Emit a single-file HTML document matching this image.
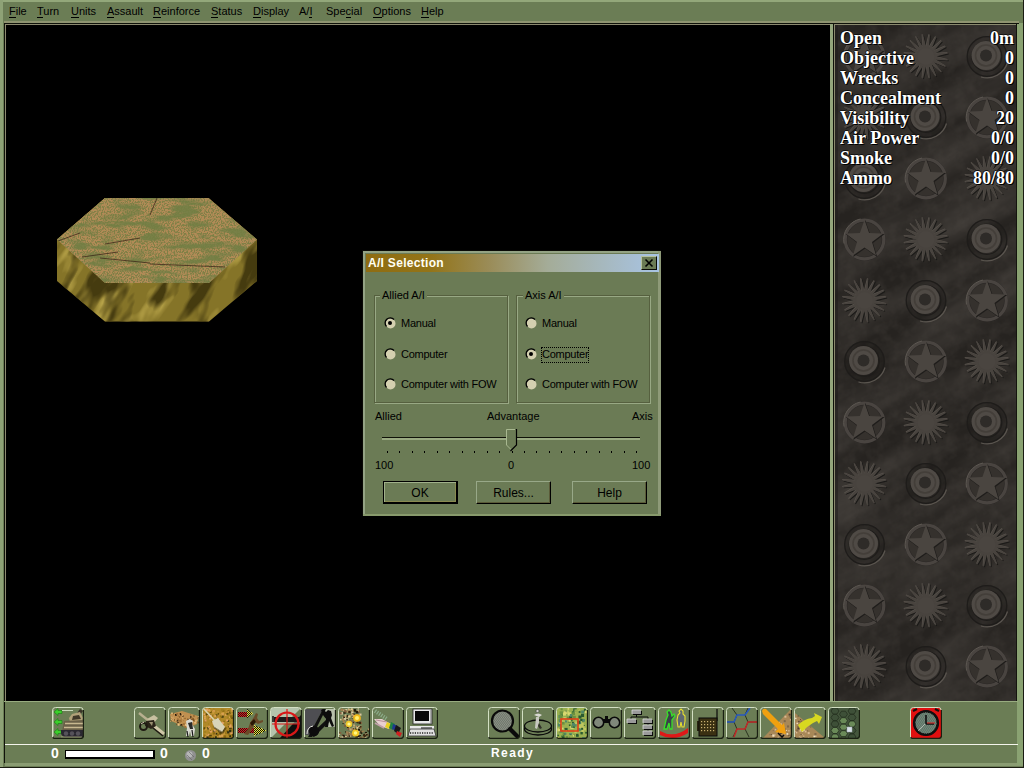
<!DOCTYPE html>
<html><head><meta charset="utf-8">
<style>
*{margin:0;padding:0;box-sizing:border-box}
html,body{width:1024px;height:768px;overflow:hidden;background:#6b7d55;position:relative;font-family:"Liberation Sans",sans-serif}
.a{position:absolute}
.menu span{position:absolute;top:5px;font-size:11px;color:#000;line-height:13px;letter-spacing:0}
.menu u{text-decoration:none;border-bottom:1px solid #000}
#map{left:4px;top:23px;width:826px;height:678px;background:#000;border-top:1px solid #101008;border-left:1px solid #101008}
.dlg{font-size:12px;color:#000}
.btn{position:absolute;height:24px;font-size:12px;text-align:center;line-height:22px}
.ico{position:absolute;top:707px;width:32px;height:32px;border-radius:4px;overflow:hidden;border-top:1px solid #c9d6b8;border-left:1px solid #c9d6b8;border-right:1px solid #2c3322;border-bottom:1px solid #2c3322;background:#6b7d55}
.ico svg{position:absolute;left:0;top:0}
.stat{position:absolute;font-family:"Liberation Serif",serif;font-weight:bold;font-size:18px;color:#fff;line-height:20px;text-shadow:1px 1px 0 #000,-1px 0 0 #111,0 -1px 0 #111}
</style></head><body>
<!-- outer frame -->
<div class="a" style="left:0;top:0;width:1024px;height:2px;background:#93a77a"></div>
<div class="a" style="left:0;top:0;width:3px;height:768px;background:#8ea276"></div>
<div class="a" style="left:1023px;top:0;width:1px;height:768px;background:#1a1c12"></div>
<div class="a" style="left:0;top:767px;width:1024px;height:1px;background:#1a1c12"></div>
<div class="a" style="left:5px;top:763px;width:1018px;height:3px;background:#8a9c72"></div>
<div class="a" style="left:1017px;top:23px;width:6px;height:742px;background:#8aa272"></div>
<div class="a" style="left:4px;top:21px;width:1015px;height:2px;background:#8f9470"></div>
<div class="a" style="left:4px;top:23px;width:1015px;height:1px;background:#10120a"></div>
<div class="a" style="left:4px;top:23px;width:1px;height:740px;background:#10120a"></div>

<!-- menu -->
<div class="menu">
<span style="left:9px"><u>F</u>ile</span>
<span style="left:37px"><u>T</u>urn</span>
<span style="left:71px"><u>U</u>nits</span>
<span style="left:107px"><u>A</u>ssault</span>
<span style="left:153px"><u>R</u>einforce</span>
<span style="left:211px"><u>S</u>tatus</span>
<span style="left:253px"><u>D</u>isplay</span>
<span style="left:299px">A/<u>I</u></span>
<span style="left:326px">Spe<u>c</u>ial</span>
<span style="left:373px"><u>O</u>ptions</span>
<span style="left:421px"><u>H</u>elp</span>
</div>

<!-- map -->
<div class="a" style="left:5px;top:24px;width:825px;height:677px;background:#000;border-top:1px solid #8c8a70;border-left:1px solid #8c8a70"></div>
<div class="a" style="left:4px;top:701px;width:1014px;height:1px;background:#98ac80"></div>
<div class="a" style="left:830px;top:24px;width:3px;height:677px;background:#94a67c"></div>
<div class="a" style="left:833px;top:24px;width:1px;height:677px;background:#10120a"></div>

<svg class="a" style="left:0;top:0" width="300" height="340" viewBox="0 0 300 340">
<defs>
<clipPath id="topf"><polygon points="105,198 208.5,198 257,239.5 209,283 105,283 57,239.5"/></clipPath>
<clipPath id="allf"><polygon points="105,198 208.5,198 257,239.5 257,281 209,321.5 105,321.5 57,281 57,239.5"/></clipPath>
<filter id="spk" color-interpolation-filters="sRGB" filterUnits="userSpaceOnUse" x="50" y="190" width="215" height="140">
<feTurbulence type="fractalNoise" baseFrequency="0.7 0.6" numOctaves="2" seed="5" result="n"/>
<feColorMatrix in="n" type="matrix" values="0 0 0 0 0.45  0 0 0 0 0.49  0 0 0 0 0.26  0 0 0 6 -2.7"/>
</filter>
<filter id="spk2" color-interpolation-filters="sRGB" filterUnits="userSpaceOnUse" x="50" y="190" width="215" height="140">
<feTurbulence type="fractalNoise" baseFrequency="0.035 0.14" numOctaves="3" seed="9" result="n"/>
<feColorMatrix in="n" type="matrix" values="0 0 0 0 0.47  0 0 0 0 0.50  0 0 0 0 0.28  0 0 0 4 -1.75"/>
</filter>
<filter id="side" color-interpolation-filters="sRGB" filterUnits="userSpaceOnUse" x="-100" y="-100" width="500" height="500">
<feTurbulence type="fractalNoise" baseFrequency="0.02 0.06" numOctaves="3" seed="3" result="n"/>
<feColorMatrix in="n" type="matrix" values="0 0 0 0 0.27  0 0 0 0 0.23  0 0 0 0 0.06  0 0 0 4.5 -2.1"/>
</filter>
<filter id="side2" color-interpolation-filters="sRGB" filterUnits="userSpaceOnUse" x="-100" y="-100" width="500" height="500">
<feTurbulence type="fractalNoise" baseFrequency="0.02 0.05" numOctaves="3" seed="17" result="n"/>
<feColorMatrix in="n" type="matrix" values="0 0 0 0 0.74  0 0 0 0 0.66  0 0 0 0 0.30  0 0 0 4.5 -2.3"/>
</filter>
</defs>
<g clip-path="url(#allf)">
<rect x="50" y="190" width="215" height="140" fill="#857428"/>
<g transform="rotate(-60 157 280)"><rect x="20" y="150" width="280" height="260" filter="url(#side2)"/>
<rect x="20" y="150" width="280" height="260" filter="url(#side)"/></g>
</g>
<g clip-path="url(#topf)">
<rect x="50" y="190" width="215" height="100" fill="#b28b57"/>
<rect x="50" y="190" width="215" height="100" filter="url(#spk2)"/>
<rect x="50" y="190" width="215" height="100" filter="url(#spk)" opacity="0.8"/>
<path d="M58 241 L80 233 M82 257 L118 252 M100 258 L150 263 M150 264 L225 267 M157 198 L150 215 M105 244 L140 238" stroke="#3a2418" stroke-width="1" opacity="0.75"/>
</g>
</svg>
<!-- PANEL -->
<div id="panel" class="a" style="left:834px;top:24px;width:183px;height:677px;background:#3b3733;overflow:hidden">
<svg width="183" height="677" style="position:absolute;left:0;top:0">
<defs>
<filter id="tex" color-interpolation-filters="sRGB" filterUnits="userSpaceOnUse" x="-300" y="-300" width="900" height="1300">
<feTurbulence type="fractalNoise" baseFrequency="0.007 0.03" numOctaves="5" seed="23"/>
<feColorMatrix type="matrix" values="0 0 0 0 0.33  0 0 0 0 0.31  0 0 0 0 0.29  0.9 0 0 0 -0.25"/>
</filter>
<filter id="fine" color-interpolation-filters="sRGB" x="0" y="0" width="100%" height="100%">
<feTurbulence type="fractalNoise" baseFrequency="0.09" numOctaves="3" seed="4"/>
<feColorMatrix type="matrix" values="0 0 0 0 0.30  0 0 0 0 0.28  0 0 0 0 0.26  0.6 0 0 0 -0.25"/>
</filter>
<g id="star">
<circle r="21" fill="#2a2725"/>
<circle r="19.3" fill="none" stroke="#494440" stroke-width="3.2"/>
<path d="M-20.5,4 A21 21 0 0 1 -4,-20.5" fill="none" stroke="#5c5751" stroke-width="1"/>
<circle r="17.2" fill="#35312d"/>
<polygon points="0.0,-20.5 4.8,-6.6 19.5,-6.3 7.8,2.5 12.0,16.6 0.0,8.2 -12.0,16.6 -7.8,2.5 -19.5,-6.3 -4.8,-6.6" fill="#1f1d1b" transform="translate(0.7,0.9)"/>
<polygon points="0.0,-19.8 4.6,-6.4 18.8,-6.1 7.5,2.4 11.6,16.0 0.0,7.9 -11.6,16.0 -7.5,2.4 -18.8,-6.1 -4.6,-6.4" fill="#4a4540"/>
</g>
<g id="sun">
<path d="M7.1,2.9 L21.7,3.9 L21.8,2.9 L7.7,-0.5ZM5.9,4.9 L19.4,10.4 L19.8,9.5 L7.5,1.9ZM4.1,6.5 L15.2,15.9 L15.9,15.2 L6.5,4.1ZM1.9,7.5 L9.5,19.8 L10.4,19.4 L4.9,5.9ZM-0.5,7.7 L2.9,21.8 L3.9,21.7 L2.9,7.1ZM-2.9,7.1 L-3.9,21.7 L-2.9,21.8 L0.5,7.7ZM-4.9,5.9 L-10.4,19.4 L-9.5,19.8 L-1.9,7.5ZM-6.5,4.1 L-15.9,15.2 L-15.2,15.9 L-4.1,6.5ZM-7.5,1.9 L-19.8,9.5 L-19.4,10.4 L-5.9,4.9ZM-7.7,-0.5 L-21.8,2.9 L-21.7,3.9 L-7.1,2.9ZM-7.1,-2.9 L-21.7,-3.9 L-21.8,-2.9 L-7.7,0.5ZM-5.9,-4.9 L-19.4,-10.4 L-19.8,-9.5 L-7.5,-1.9ZM-4.1,-6.5 L-15.2,-15.9 L-15.9,-15.2 L-6.5,-4.1ZM-1.9,-7.5 L-9.5,-19.8 L-10.4,-19.4 L-4.9,-5.9ZM0.5,-7.7 L-2.9,-21.8 L-3.9,-21.7 L-2.9,-7.1ZM2.9,-7.1 L3.9,-21.7 L2.9,-21.8 L-0.5,-7.7ZM4.9,-5.9 L10.4,-19.4 L9.5,-19.8 L1.9,-7.5ZM6.5,-4.1 L15.9,-15.2 L15.2,-15.9 L4.1,-6.5ZM7.5,-1.9 L19.8,-9.5 L19.4,-10.4 L5.9,-4.9ZM7.7,0.5 L21.8,-2.9 L21.7,-3.9 L7.1,-2.9Z" fill="#1b1a18" transform="translate(0.9,0.9)"/>
<path d="M7.1,2.9 L21.7,3.9 L21.8,2.9 L7.7,-0.5ZM5.9,4.9 L19.4,10.4 L19.8,9.5 L7.5,1.9ZM4.1,6.5 L15.2,15.9 L15.9,15.2 L6.5,4.1ZM1.9,7.5 L9.5,19.8 L10.4,19.4 L4.9,5.9ZM-0.5,7.7 L2.9,21.8 L3.9,21.7 L2.9,7.1ZM-2.9,7.1 L-3.9,21.7 L-2.9,21.8 L0.5,7.7ZM-4.9,5.9 L-10.4,19.4 L-9.5,19.8 L-1.9,7.5ZM-6.5,4.1 L-15.9,15.2 L-15.2,15.9 L-4.1,6.5ZM-7.5,1.9 L-19.8,9.5 L-19.4,10.4 L-5.9,4.9ZM-7.7,-0.5 L-21.8,2.9 L-21.7,3.9 L-7.1,2.9ZM-7.1,-2.9 L-21.7,-3.9 L-21.8,-2.9 L-7.7,0.5ZM-5.9,-4.9 L-19.4,-10.4 L-19.8,-9.5 L-7.5,-1.9ZM-4.1,-6.5 L-15.2,-15.9 L-15.9,-15.2 L-6.5,-4.1ZM-1.9,-7.5 L-9.5,-19.8 L-10.4,-19.4 L-4.9,-5.9ZM0.5,-7.7 L-2.9,-21.8 L-3.9,-21.7 L-2.9,-7.1ZM2.9,-7.1 L3.9,-21.7 L2.9,-21.8 L-0.5,-7.7ZM4.9,-5.9 L10.4,-19.4 L9.5,-19.8 L1.9,-7.5ZM6.5,-4.1 L15.9,-15.2 L15.2,-15.9 L4.1,-6.5ZM7.5,-1.9 L19.8,-9.5 L19.4,-10.4 L5.9,-4.9ZM7.7,0.5 L21.8,-2.9 L21.7,-3.9 L7.1,-2.9Z" fill="#58534d" transform="translate(-0.5,-0.5)"/>
<path d="M7.1,2.9 L21.7,3.9 L21.8,2.9 L7.7,-0.5ZM5.9,4.9 L19.4,10.4 L19.8,9.5 L7.5,1.9ZM4.1,6.5 L15.2,15.9 L15.9,15.2 L6.5,4.1ZM1.9,7.5 L9.5,19.8 L10.4,19.4 L4.9,5.9ZM-0.5,7.7 L2.9,21.8 L3.9,21.7 L2.9,7.1ZM-2.9,7.1 L-3.9,21.7 L-2.9,21.8 L0.5,7.7ZM-4.9,5.9 L-10.4,19.4 L-9.5,19.8 L-1.9,7.5ZM-6.5,4.1 L-15.9,15.2 L-15.2,15.9 L-4.1,6.5ZM-7.5,1.9 L-19.8,9.5 L-19.4,10.4 L-5.9,4.9ZM-7.7,-0.5 L-21.8,2.9 L-21.7,3.9 L-7.1,2.9ZM-7.1,-2.9 L-21.7,-3.9 L-21.8,-2.9 L-7.7,0.5ZM-5.9,-4.9 L-19.4,-10.4 L-19.8,-9.5 L-7.5,-1.9ZM-4.1,-6.5 L-15.2,-15.9 L-15.9,-15.2 L-6.5,-4.1ZM-1.9,-7.5 L-9.5,-19.8 L-10.4,-19.4 L-4.9,-5.9ZM0.5,-7.7 L-2.9,-21.8 L-3.9,-21.7 L-2.9,-7.1ZM2.9,-7.1 L3.9,-21.7 L2.9,-21.8 L-0.5,-7.7ZM4.9,-5.9 L10.4,-19.4 L9.5,-19.8 L1.9,-7.5ZM6.5,-4.1 L15.9,-15.2 L15.2,-15.9 L4.1,-6.5ZM7.5,-1.9 L19.8,-9.5 L19.4,-10.4 L5.9,-4.9ZM7.7,0.5 L21.8,-2.9 L21.7,-3.9 L7.1,-2.9Z" fill="#48433e"/>
<circle r="8.5" fill="#4a4540"/>
</g>
<g id="tgt">
<circle r="19.8" fill="#000" fill-opacity="0.12" stroke="#1e1c1a" stroke-width="1.3"/>
<path d="M20.5,6 A21.3 21.3 0 0 1 -6,20.5" fill="none" stroke="#5a554f" stroke-width="1.2"/>
<circle r="15" fill="none" stroke="#1e1c1a" stroke-width="1.2" transform="translate(-0.2,-0.2)"/>
<circle r="14.5" fill="#4f4a45" transform="translate(-1,-1)"/>
<circle r="10.5" fill="none" stroke="#433e39" stroke-width="1.6" transform="translate(-1,-1)"/>
<circle r="6" fill="#2e2b28" transform="translate(-1,-1)"/>
</g>
</defs>
<rect width="183" height="677" fill="#262320"/>
<rect x="-300" y="-300" width="900" height="1300" filter="url(#tex)" transform="rotate(-30 91 338)"/>
<rect width="183" height="677" filter="url(#fine)"/>
<use href="#star" x="30.5" y="32.5"/><use href="#sun" x="92" y="32.5"/><use href="#tgt" x="153" y="32.5"/><use href="#sun" x="30.5" y="93.5"/><use href="#tgt" x="92" y="93.5"/><use href="#star" x="153" y="93.5"/><use href="#tgt" x="30.5" y="154.5"/><use href="#star" x="92" y="154.5"/><use href="#sun" x="153" y="154.5"/><use href="#star" x="30.5" y="215.5"/><use href="#sun" x="92" y="215.5"/><use href="#tgt" x="153" y="215.5"/><use href="#sun" x="30.5" y="276.5"/><use href="#tgt" x="92" y="276.5"/><use href="#star" x="153" y="276.5"/><use href="#tgt" x="30.5" y="337.5"/><use href="#star" x="92" y="337.5"/><use href="#sun" x="153" y="337.5"/><use href="#star" x="30.5" y="398.5"/><use href="#sun" x="92" y="398.5"/><use href="#tgt" x="153" y="398.5"/><use href="#sun" x="30.5" y="459.5"/><use href="#tgt" x="92" y="459.5"/><use href="#star" x="153" y="459.5"/><use href="#tgt" x="30.5" y="520.5"/><use href="#star" x="92" y="520.5"/><use href="#sun" x="153" y="520.5"/><use href="#star" x="30.5" y="581.5"/><use href="#sun" x="92" y="581.5"/><use href="#tgt" x="153" y="581.5"/><use href="#sun" x="30.5" y="642.5"/><use href="#tgt" x="92" y="642.5"/><use href="#star" x="153" y="642.5"/>
<rect x="1" y="0" width="3" height="677" fill="#1e1c1a" opacity="0.5"/><rect x="0" y="0" width="1" height="677" fill="#8a8a6e"/><rect x="0" y="0" width="183" height="1" fill="#8a8a6e"/>
</svg>
</div>
<div class="stat" style="left:840px;top:28px">Open<br>Objective<br>Wrecks<br>Concealment<br>Visibility<br>Air Power<br>Smoke<br>Ammo</div>
<div class="stat" style="left:900px;top:28px;width:114px;text-align:right">0m<br>0<br>0<br>0<br>20<br>0/0<br>0/0<br>80/80</div>

<div class="a" style="left:1016px;top:24px;width:1px;height:677px;background:#14140e"></div>
<!-- DIALOG -->
<div id="dlg" class="a dlg" style="left:362px;top:250px;width:299px;height:266px;background:#6b7b55">
<div class="a" style="left:0;top:0;width:299px;height:1px;background:#0a0a06"></div>
<div class="a" style="left:0;top:0;width:1px;height:266px;background:#0a0a06"></div>
<div class="a" style="left:1px;top:1px;width:297px;height:2px;background:#94a384"></div>
<div class="a" style="left:1px;top:1px;width:2px;height:264px;background:#94a384"></div>
<div class="a" style="left:296px;top:1px;width:3px;height:265px;background:#8e9a78"></div>
<div class="a" style="left:1px;top:264px;width:298px;height:2px;background:#889a6c"></div>
<div class="a" style="left:4px;top:4px;width:293px;height:18px;background:linear-gradient(90deg,#8e6c12 0%,#937418 22%,#9a8c58 42%,#a4ac98 62%,#a8c4e4 100%)"></div>
<div class="a" style="left:6px;top:6px;font-weight:bold;font-size:12px;letter-spacing:0.3px;color:#fffff4;line-height:15px">A/I Selection</div>
<div class="a" style="left:279px;top:6px;width:16px;height:14px;background:#6b7b55;border-top:1px solid #b4c09c;border-left:1px solid #b4c09c;border-right:1px solid #0a0a06;border-bottom:1px solid #0a0a06"></div>
<svg class="a" style="left:279px;top:6px" width="16" height="14"><path d="M4.5 3.5 L11.5 10.5 M11.5 3.5 L4.5 10.5" stroke="#000" stroke-width="1.6"/></svg>
<!-- groups -->
<div class="a" style="left:12px;top:45px;width:134px;height:108px;border:1px solid #56603f;box-shadow:1px 1px 0 #98a884, inset 1px 1px 0 #98a884"></div>
<div class="a" style="left:18px;top:38px;padding:0 2px;background:#6b7b55;line-height:14px;font-size:11px">Allied A/I</div>
<div class="a" style="left:154px;top:45px;width:134px;height:108px;border:1px solid #56603f;box-shadow:1px 1px 0 #98a884, inset 1px 1px 0 #98a884"></div>
<div class="a" style="left:161px;top:38px;padding:0 2px;background:#6b7b55;line-height:14px;font-size:11px">Axis A/I</div>
<svg class="a" style="left:22px;top:67px" width="13" height="13"><circle cx="6.5" cy="6.5" r="5" fill="#d4d0b0"/><path d="M10 2.5 A5 5 0 0 0 2.5 9.5" stroke="#000" stroke-width="1.3" fill="none"/><circle cx="6" cy="6" r="2" fill="#000"/></svg><div class="a" style="left:39px;top:66px;font-size:11px;line-height:14px;letter-spacing:-0.25px">Manual</div>
<svg class="a" style="left:163px;top:67px" width="13" height="13"><circle cx="6.5" cy="6.5" r="5" fill="#d4d0b0"/><path d="M10 2.5 A5 5 0 0 0 2.5 9.5" stroke="#000" stroke-width="1.3" fill="none"/></svg><div class="a" style="left:180px;top:66px;font-size:11px;line-height:14px;letter-spacing:-0.25px">Manual</div>
<svg class="a" style="left:22px;top:98px" width="13" height="13"><circle cx="6.5" cy="6.5" r="5" fill="#d4d0b0"/><path d="M10 2.5 A5 5 0 0 0 2.5 9.5" stroke="#000" stroke-width="1.3" fill="none"/></svg><div class="a" style="left:39px;top:97px;font-size:11px;line-height:14px;letter-spacing:-0.25px">Computer</div>
<svg class="a" style="left:163px;top:98px" width="13" height="13"><circle cx="6.5" cy="6.5" r="5" fill="#d4d0b0"/><path d="M10 2.5 A5 5 0 0 0 2.5 9.5" stroke="#000" stroke-width="1.3" fill="none"/><circle cx="6" cy="6" r="2" fill="#000"/></svg><div class="a" style="left:180px;top:97px;font-size:11px;line-height:14px;letter-spacing:-0.25px">Computer</div>
<svg class="a" style="left:22px;top:128px" width="13" height="13"><circle cx="6.5" cy="6.5" r="5" fill="#d4d0b0"/><path d="M10 2.5 A5 5 0 0 0 2.5 9.5" stroke="#000" stroke-width="1.3" fill="none"/></svg><div class="a" style="left:39px;top:127px;font-size:11px;line-height:14px;letter-spacing:-0.25px">Computer with FOW</div>
<svg class="a" style="left:163px;top:128px" width="13" height="13"><circle cx="6.5" cy="6.5" r="5" fill="#d4d0b0"/><path d="M10 2.5 A5 5 0 0 0 2.5 9.5" stroke="#000" stroke-width="1.3" fill="none"/></svg><div class="a" style="left:180px;top:127px;font-size:11px;line-height:14px;letter-spacing:-0.25px">Computer with FOW</div>
<div class="a" style="left:179px;top:97px;width:48px;height:16px;border:1px dotted #000"></div>
<div class="a" style="left:13px;top:159px;font-size:11px;line-height:14px">Allied</div>
<div class="a" style="left:125px;top:159px;font-size:11px;line-height:14px">Advantage</div>
<div class="a" style="left:270px;top:159px;font-size:11px;line-height:14px">Axis</div>
<div class="a" style="left:20px;top:187px;width:258px;height:1px;background:#101208"></div><div class="a" style="left:20px;top:188px;width:258px;height:2px;background:#9aaa82"></div>
<svg class="a" style="left:143px;top:178px" width="14" height="24"><rect x="1" y="1" width="10" height="16" fill="#6b7b55"/><path d="M1 17 L6 22 L11 17 Z" fill="#6b7b55"/><path d="M1.5 17 V1.5 H10" stroke="#a8b890" stroke-width="1" fill="none"/><path d="M1.5 17 L6 21.5" stroke="#a8b890" stroke-width="1" fill="none"/><path d="M11.5 1 V17 L5.5 23" stroke="#000" stroke-width="1.2" fill="none"/></svg>
<div class="a" style="left:25px;top:201px;width:1px;height:2px;background:#000"></div><div class="a" style="left:37px;top:201px;width:1px;height:2px;background:#000"></div><div class="a" style="left:50px;top:201px;width:1px;height:2px;background:#000"></div><div class="a" style="left:62px;top:201px;width:1px;height:2px;background:#000"></div><div class="a" style="left:75px;top:201px;width:1px;height:2px;background:#000"></div><div class="a" style="left:87px;top:201px;width:1px;height:2px;background:#000"></div><div class="a" style="left:100px;top:201px;width:1px;height:2px;background:#000"></div><div class="a" style="left:112px;top:201px;width:1px;height:2px;background:#000"></div><div class="a" style="left:125px;top:201px;width:1px;height:2px;background:#000"></div><div class="a" style="left:137px;top:201px;width:1px;height:2px;background:#000"></div><div class="a" style="left:150px;top:201px;width:1px;height:2px;background:#000"></div><div class="a" style="left:162px;top:201px;width:1px;height:2px;background:#000"></div><div class="a" style="left:174px;top:201px;width:1px;height:2px;background:#000"></div><div class="a" style="left:187px;top:201px;width:1px;height:2px;background:#000"></div><div class="a" style="left:199px;top:201px;width:1px;height:2px;background:#000"></div><div class="a" style="left:212px;top:201px;width:1px;height:2px;background:#000"></div><div class="a" style="left:224px;top:201px;width:1px;height:2px;background:#000"></div><div class="a" style="left:237px;top:201px;width:1px;height:2px;background:#000"></div><div class="a" style="left:249px;top:201px;width:1px;height:2px;background:#000"></div><div class="a" style="left:262px;top:201px;width:1px;height:2px;background:#000"></div><div class="a" style="left:274px;top:201px;width:1px;height:2px;background:#000"></div>
<div class="a" style="left:13px;top:208px;font-size:11px;line-height:14px">100</div>
<div class="a" style="left:146px;top:208px;font-size:11px;line-height:14px">0</div>
<div class="a" style="left:270px;top:208px;font-size:11px;line-height:14px">100</div>
<div class="btn" style="left:21px;top:231px;width:75px;height:23px;border:1px solid #000;border-right-width:2px;border-bottom-width:2px;box-shadow:inset 1px 1px 0 #a0b08a, inset -1px -1px 0 #8a8a50">OK</div>
<div class="btn" style="left:114px;top:231px;width:75px;height:23px;border-top:1px solid #98a888;border-left:1px solid #98a888;border-right:1px solid #000;border-bottom:1px solid #000;box-shadow:inset -1px -1px 0 #5a5a38">Rules...</div>
<div class="btn" style="left:210px;top:231px;width:75px;height:23px;border-top:1px solid #98a888;border-left:1px solid #98a888;border-right:1px solid #000;border-bottom:1px solid #000;box-shadow:inset -1px -1px 0 #5a5a38">Help</div>
</div>

<!-- toolbar -->
<div class="a" style="left:5px;top:744px;width:1013px;height:1px;background:#f4f4ec"></div>
<div id="tb">
<svg class="a" style="left:52px;top:707px" width="32" height="32" viewBox="0 0 32 32"><rect x="1" y="1" width="30" height="30" fill="#6b7d55"/><path d="M1 3 V29" stroke="#c8d8b8" stroke-width="1"/><g fill="#3ccf2c" stroke="#1a7a10" stroke-width="0.6"><path d="M2 5 L6 1.5 V3.5 H10 V6.5 H6 V8.5 Z"/><path d="M2 15 L6 11.5 V13.5 H10 V16.5 H6 V18.5 Z"/><path d="M2 25 L6 21.5 V23.5 H10 V26.5 H6 V28.5 Z"/></g><path d="M10 3.5 H21" stroke="#c8d8b8" stroke-width="1"/><path d="M28 2 L31 4 L25 12 L22 10 Z" fill="#3a3428"/><path d="M20 7 L28 5 L31 11 L30 14 L18 15 L17 11 Z" fill="#b0a078"/><path d="M21 9 L27 8 L29 12 L20 13 Z" fill="#403828"/><path d="M12 14 L31 13 V23 L10 24 Z" fill="#6a6048"/><path d="M13 16.5 H31 M12 20.5 H31" stroke="#c8b890" stroke-width="1.6"/><path d="M9 23 H31 V30 H12 Q8 28 9 23 Z" fill="#2a2830"/><circle cx="14" cy="26.5" r="2.2" fill="#55525a"/><circle cx="20" cy="26.5" r="2.2" fill="#55525a"/><circle cx="26" cy="26.5" r="2.2" fill="#55525a"/><path d="M9 30 H30" stroke="#b0a888" stroke-width="0.8"/><path d="M0.5 31 V3.5 Q0.5 0.5 3.5 0.5 H28.5 Q31 0.5 31 3" fill="none" stroke="#d3dfc3" stroke-width="1"/><path d="M31.5 3 V28.5 Q31.5 31.5 28.5 31.5 H3 Q1 31.5 0.8 30" fill="none" stroke="#1a2012" stroke-width="1.3"/></svg>
<svg class="a" style="left:134px;top:707px" width="32" height="32" viewBox="0 0 32 32"><rect x="1" y="1" width="30" height="30" fill="#6b7d55"/><path d="M5 6 L15 14" stroke="#b8b090" stroke-width="2.4"/><path d="M13 12 L20 8 L24 11 L19 17 Z" fill="#c8c0a0"/><path d="M15 15 L30 27" stroke="#d0c8a8" stroke-width="3.4"/><path d="M14 17 L29 29" stroke="#1e1a12" stroke-width="1.6"/><path d="M12 14 L20 13 L22 19 L17 22 L11 19 Z" fill="#2a2418"/><path d="M15 15 L19 15 L18 19 Z" fill="#9a9070"/><circle cx="9.5" cy="19.5" r="3.5" fill="none" stroke="#1e1a12" stroke-width="2"/><path d="M7 17 L10 15" stroke="#d8d0b8" stroke-width="1"/><path d="M0.5 31 V3.5 Q0.5 0.5 3.5 0.5 H28.5 Q31 0.5 31 3" fill="none" stroke="#d3dfc3" stroke-width="1"/><path d="M31.5 3 V28.5 Q31.5 31.5 28.5 31.5 H3 Q1 31.5 0.8 30" fill="none" stroke="#1a2012" stroke-width="1.3"/></svg>
<svg class="a" style="left:168px;top:707px" width="32" height="32" viewBox="0 0 32 32"><rect x="1" y="1" width="30" height="30" fill="#6b7d55"/><path d="M2 7 L14 4 L30 9 L29 17 L20 21 L3 14 Z" fill="#c09050"/><rect x="8.7" y="12.7" width="1.9" height="1.9" fill="#201408"/><rect x="15.3" y="13.3" width="0.8" height="0.8" fill="#a07038"/><rect x="25.4" y="8.1" width="1.0" height="1.0" fill="#7a5020"/><rect x="22.1" y="12.7" width="1.4" height="1.4" fill="#a07038"/><rect x="19.8" y="17.9" width="1.3" height="1.3" fill="#a07038"/><rect x="25.1" y="8.3" width="1.7" height="1.7" fill="#a07038"/><rect x="26.6" y="15.4" width="1.3" height="1.3" fill="#d0a060"/><rect x="24.4" y="11.1" width="1.9" height="1.9" fill="#7a5020"/><rect x="4.7" y="6.2" width="1.1" height="1.1" fill="#7a5020"/><rect x="20.8" y="16.5" width="1.3" height="1.3" fill="#201408"/><rect x="25.3" y="13.2" width="1.5" height="1.5" fill="#a07038"/><rect x="18.4" y="18.5" width="1.8" height="1.8" fill="#e8c080"/><rect x="29.7" y="14.7" width="1.6" height="1.6" fill="#7a5020"/><rect x="11.1" y="12.7" width="1.5" height="1.5" fill="#a07038"/><rect x="22.0" y="7.4" width="1.1" height="1.1" fill="#a07038"/><rect x="5.5" y="11.7" width="0.9" height="0.9" fill="#d0a060"/><rect x="24.4" y="10.6" width="0.8" height="0.8" fill="#7a5020"/><rect x="14.0" y="10.6" width="0.9" height="0.9" fill="#e8c080"/><rect x="22.1" y="9.3" width="1.4" height="1.4" fill="#201408"/><rect x="30.0" y="9.0" width="0.9" height="0.9" fill="#e8c080"/><rect x="17.0" y="19.2" width="1.1" height="1.1" fill="#d0a060"/><rect x="9.4" y="15.0" width="1.2" height="1.2" fill="#201408"/><rect x="12.6" y="11.4" width="1.3" height="1.3" fill="#a07038"/><rect x="26.3" y="14.9" width="1.5" height="1.5" fill="#e8c080"/><rect x="28.3" y="12.1" width="1.6" height="1.6" fill="#d0a060"/><rect x="14.2" y="8.1" width="1.5" height="1.5" fill="#201408"/><rect x="2.3" y="10.6" width="1.2" height="1.2" fill="#a07038"/><rect x="12.5" y="13.4" width="0.9" height="0.9" fill="#7a5020"/><rect x="19.6" y="11.5" width="1.5" height="1.5" fill="#201408"/><rect x="9.8" y="11.8" width="0.9" height="0.9" fill="#a07038"/><rect x="9.0" y="11.3" width="1.5" height="1.5" fill="#a07038"/><rect x="7.0" y="7.0" width="1.8" height="1.8" fill="#201408"/><rect x="9.4" y="16.6" width="1.7" height="1.7" fill="#e8c080"/><rect x="2.8" y="13.1" width="1.2" height="1.2" fill="#7a5020"/><rect x="8.2" y="16.9" width="1.2" height="1.2" fill="#7a5020"/><rect x="21.0" y="14.4" width="0.9" height="0.9" fill="#e8c080"/><rect x="11.0" y="9.3" width="1.3" height="1.3" fill="#7a5020"/><rect x="11.4" y="14.4" width="1.3" height="1.3" fill="#a07038"/><rect x="8.3" y="5.9" width="1.9" height="1.9" fill="#a07038"/><rect x="10.8" y="17.4" width="1.0" height="1.0" fill="#a07038"/><rect x="9.8" y="16.9" width="1.8" height="1.8" fill="#e8c080"/><rect x="11.7" y="6.1" width="1.4" height="1.4" fill="#201408"/><rect x="25.8" y="11.4" width="1.1" height="1.1" fill="#d0a060"/><rect x="13.6" y="7.2" width="1.9" height="1.9" fill="#d0a060"/><rect x="14.2" y="19.2" width="0.8" height="0.8" fill="#7a5020"/><rect x="14.8" y="16.1" width="2.0" height="2.0" fill="#a07038"/><rect x="17.2" y="18.2" width="1.8" height="1.8" fill="#e8c080"/><rect x="24.5" y="12.2" width="1.9" height="1.9" fill="#7a5020"/><rect x="27.2" y="13.2" width="1.4" height="1.4" fill="#e8c080"/><rect x="5.4" y="12.1" width="1.6" height="1.6" fill="#7a5020"/><rect x="16.7" y="10.6" width="0.9" height="0.9" fill="#a07038"/><rect x="17.1" y="17.0" width="1.2" height="1.2" fill="#e8c080"/><rect x="7.5" y="12.6" width="1.0" height="1.0" fill="#e8c080"/><rect x="2.2" y="14.1" width="0.9" height="0.9" fill="#d0a060"/><rect x="9.6" y="8.3" width="1.4" height="1.4" fill="#a07038"/><rect x="3.4" y="9.2" width="1.8" height="1.8" fill="#e8c080"/><rect x="3.4" y="11.7" width="1.8" height="1.8" fill="#e8c080"/><rect x="4.4" y="12.0" width="1.0" height="1.0" fill="#201408"/><rect x="4.0" y="10.2" width="1.5" height="1.5" fill="#d0a060"/><rect x="12.1" y="7.1" width="1.3" height="1.3" fill="#201408"/><rect x="22.2" y="16.7" width="1.0" height="1.0" fill="#a07038"/><rect x="12.5" y="13.7" width="1.3" height="1.3" fill="#a07038"/><rect x="24.4" y="14.0" width="0.9" height="0.9" fill="#d0a060"/><rect x="19.6" y="16.2" width="1.3" height="1.3" fill="#201408"/><rect x="21.4" y="11.4" width="1.1" height="1.1" fill="#7a5020"/><rect x="9.6" y="13.4" width="1.1" height="1.1" fill="#d0a060"/><rect x="17.7" y="17.9" width="1.4" height="1.4" fill="#e8c080"/><rect x="20.5" y="18.2" width="1.6" height="1.6" fill="#d0a060"/><rect x="22.5" y="13.0" width="1.8" height="1.8" fill="#e8c080"/><rect x="22.1" y="11.6" width="1.7" height="1.7" fill="#7a5020"/><rect x="3.2" y="5.5" width="1.6" height="1.6" fill="#e8c080"/><rect x="12.5" y="17.1" width="1.8" height="1.8" fill="#201408"/><rect x="20.9" y="17.4" width="1.5" height="1.5" fill="#201408"/><rect x="23.5" y="12.2" width="0.9" height="0.9" fill="#7a5020"/><rect x="3.7" y="9.2" width="1.0" height="1.0" fill="#a07038"/><rect x="20.1" y="11.3" width="1.1" height="1.1" fill="#d0a060"/><rect x="18.8" y="19.0" width="1.3" height="1.3" fill="#a07038"/><rect x="4.3" y="12.0" width="1.8" height="1.8" fill="#d0a060"/><rect x="29.1" y="10.6" width="1.7" height="1.7" fill="#a07038"/><rect x="20.9" y="12.3" width="1.0" height="1.0" fill="#d0a060"/><rect x="13.2" y="18.2" width="0.9" height="0.9" fill="#7a5020"/><rect x="16.5" y="11.1" width="1.0" height="1.0" fill="#7a5020"/><rect x="16.4" y="19.0" width="1.9" height="1.9" fill="#a07038"/><path d="M18 14 L22 12 L25 14 L24 17 L27 22 L26 29 L23 29 L22 24 L21 29 L18 29 L19 21 Z" fill="#d8d8d0"/><path d="M20 16 L24 15 L25 22 L22 22 Z" fill="#2a2a28"/><path d="M19 24 L20 30 M24 23 L25 30" stroke="#181818" stroke-width="1.2"/><path d="M0.5 31 V3.5 Q0.5 0.5 3.5 0.5 H28.5 Q31 0.5 31 3" fill="none" stroke="#d3dfc3" stroke-width="1"/><path d="M31.5 3 V28.5 Q31.5 31.5 28.5 31.5 H3 Q1 31.5 0.8 30" fill="none" stroke="#1a2012" stroke-width="1.3"/></svg>
<svg class="a" style="left:202px;top:707px" width="32" height="32" viewBox="0 0 32 32"><rect x="1" y="1" width="30" height="30" fill="#b08828"/><rect x="7.8" y="4.0" width="1.8" height="1.8" fill="#5a4808"/><rect x="3.6" y="1.6" width="2.5" height="2.5" fill="#e0a060"/><rect x="24.2" y="23.2" width="1.8" height="1.8" fill="#8a6810"/><rect x="11.4" y="23.6" width="1.2" height="1.2" fill="#303010"/><rect x="7.2" y="27.9" width="2.0" height="2.0" fill="#303010"/><rect x="8.5" y="8.9" width="1.5" height="1.5" fill="#8a6810"/><rect x="19.2" y="22.2" width="2.4" height="2.4" fill="#303010"/><rect x="11.8" y="25.5" width="2.1" height="2.1" fill="#d8a050"/><rect x="15.7" y="6.2" width="1.4" height="1.4" fill="#5a4808"/><rect x="28.4" y="24.7" width="2.3" height="2.3" fill="#e0a060"/><rect x="1.2" y="9.5" width="2.4" height="2.4" fill="#a08020"/><rect x="25.6" y="15.7" width="1.7" height="1.7" fill="#5a4808"/><rect x="9.4" y="14.1" width="1.5" height="1.5" fill="#8a6810"/><rect x="24.6" y="2.3" width="1.7" height="1.7" fill="#c89838"/><rect x="29.9" y="16.0" width="1.8" height="1.8" fill="#a08020"/><rect x="10.9" y="29.9" width="1.1" height="1.1" fill="#8a6810"/><rect x="27.5" y="19.4" width="1.4" height="1.4" fill="#5a4808"/><rect x="11.3" y="22.7" width="2.0" height="2.0" fill="#d8a050"/><rect x="6.8" y="10.4" width="1.1" height="1.1" fill="#303010"/><rect x="7.6" y="23.2" width="2.4" height="2.4" fill="#e0a060"/><rect x="4.5" y="28.1" width="1.7" height="1.7" fill="#d8a050"/><rect x="2.2" y="21.2" width="2.2" height="2.2" fill="#d8a050"/><rect x="28.8" y="1.5" width="1.5" height="1.5" fill="#d8a050"/><rect x="5.4" y="19.9" width="2.5" height="2.5" fill="#303010"/><rect x="19.0" y="24.7" width="2.0" height="2.0" fill="#d8a050"/><rect x="26.9" y="9.5" width="1.6" height="1.6" fill="#d8a050"/><rect x="28.9" y="10.6" width="1.6" height="1.6" fill="#c89838"/><rect x="14.2" y="11.6" width="1.6" height="1.6" fill="#303010"/><rect x="9.4" y="3.8" width="1.7" height="1.7" fill="#8a6810"/><rect x="7.0" y="2.7" width="2.2" height="2.2" fill="#c89838"/><rect x="18.3" y="29.1" width="1.1" height="1.1" fill="#e0a060"/><rect x="15.2" y="8.2" width="1.2" height="1.2" fill="#c89838"/><rect x="16.3" y="23.4" width="2.0" height="2.0" fill="#5a4808"/><rect x="6.8" y="6.9" width="1.7" height="1.7" fill="#5a4808"/><rect x="2.1" y="13.2" width="2.0" height="2.0" fill="#8a6810"/><rect x="13.4" y="7.3" width="1.1" height="1.1" fill="#8a6810"/><rect x="8.4" y="8.0" width="2.2" height="2.2" fill="#8a6810"/><rect x="13.1" y="8.6" width="1.1" height="1.1" fill="#d8a050"/><rect x="27.9" y="17.4" width="1.6" height="1.6" fill="#e0a060"/><rect x="27.1" y="20.0" width="2.1" height="2.1" fill="#303010"/><rect x="2.2" y="12.2" width="1.3" height="1.3" fill="#5a4808"/><rect x="26.3" y="27.1" width="1.5" height="1.5" fill="#8a6810"/><rect x="20.1" y="24.2" width="1.5" height="1.5" fill="#a08020"/><rect x="13.2" y="7.2" width="2.1" height="2.1" fill="#303010"/><rect x="8.8" y="27.8" width="1.1" height="1.1" fill="#5a4808"/><rect x="29.2" y="28.9" width="1.3" height="1.3" fill="#a08020"/><rect x="12.4" y="19.0" width="2.5" height="2.5" fill="#303010"/><rect x="20.3" y="2.8" width="2.1" height="2.1" fill="#8a6810"/><rect x="14.5" y="14.7" width="2.5" height="2.5" fill="#5a4808"/><rect x="7.3" y="1.1" width="1.0" height="1.0" fill="#8a6810"/><rect x="26.4" y="4.4" width="2.2" height="2.2" fill="#303010"/><rect x="12.1" y="7.4" width="2.4" height="2.4" fill="#c89838"/><rect x="6.8" y="20.5" width="2.3" height="2.3" fill="#d8a050"/><rect x="17.3" y="23.7" width="1.7" height="1.7" fill="#e0a060"/><rect x="3.3" y="21.2" width="1.8" height="1.8" fill="#c89838"/><rect x="26.1" y="18.6" width="1.1" height="1.1" fill="#8a6810"/><rect x="3.3" y="26.5" width="1.5" height="1.5" fill="#c89838"/><rect x="11.1" y="3.2" width="1.7" height="1.7" fill="#e0a060"/><rect x="7.0" y="29.3" width="1.4" height="1.4" fill="#5a4808"/><rect x="15.1" y="29.0" width="1.1" height="1.1" fill="#c89838"/><rect x="27.6" y="24.2" width="1.8" height="1.8" fill="#d8a050"/><rect x="13.6" y="25.9" width="1.7" height="1.7" fill="#303010"/><rect x="19.2" y="28.3" width="1.5" height="1.5" fill="#a08020"/><rect x="25.3" y="13.3" width="1.9" height="1.9" fill="#303010"/><rect x="11.8" y="5.7" width="1.2" height="1.2" fill="#a08020"/><rect x="15.3" y="10.8" width="2.6" height="2.6" fill="#e0a060"/><rect x="1.1" y="5.9" width="1.5" height="1.5" fill="#a08020"/><rect x="16.8" y="15.1" width="2.0" height="2.0" fill="#a08020"/><rect x="16.3" y="16.1" width="2.4" height="2.4" fill="#5a4808"/><rect x="11.3" y="23.2" width="2.0" height="2.0" fill="#303010"/><rect x="20.6" y="18.7" width="1.9" height="1.9" fill="#d8a050"/><rect x="27.4" y="23.7" width="1.5" height="1.5" fill="#e0a060"/><rect x="26.2" y="23.8" width="2.0" height="2.0" fill="#e0a060"/><rect x="12.4" y="8.3" width="1.6" height="1.6" fill="#e0a060"/><rect x="20.2" y="4.9" width="2.0" height="2.0" fill="#c89838"/><rect x="20.6" y="19.0" width="2.4" height="2.4" fill="#d8a050"/><rect x="11.8" y="17.7" width="2.1" height="2.1" fill="#d8a050"/><rect x="26.6" y="3.2" width="2.5" height="2.5" fill="#a08020"/><rect x="6.2" y="20.0" width="1.3" height="1.3" fill="#d8a050"/><rect x="26.6" y="18.5" width="2.5" height="2.5" fill="#e0a060"/><rect x="25.1" y="24.2" width="2.3" height="2.3" fill="#303010"/><rect x="3.9" y="6.3" width="2.1" height="2.1" fill="#5a4808"/><rect x="29.8" y="3.2" width="1.3" height="1.3" fill="#c89838"/><rect x="14.9" y="26.7" width="2.0" height="2.0" fill="#8a6810"/><rect x="25.1" y="9.8" width="1.6" height="1.6" fill="#a08020"/><rect x="18.4" y="27.0" width="1.4" height="1.4" fill="#a08020"/><rect x="11.7" y="22.6" width="2.0" height="2.0" fill="#e0a060"/><rect x="29.9" y="27.1" width="1.8" height="1.8" fill="#5a4808"/><rect x="29.1" y="10.1" width="1.7" height="1.7" fill="#5a4808"/><rect x="1.4" y="6.3" width="1.7" height="1.7" fill="#e0a060"/><rect x="17.3" y="25.0" width="2.5" height="2.5" fill="#5a4808"/><rect x="19.1" y="5.5" width="1.7" height="1.7" fill="#c89838"/><rect x="29.0" y="19.3" width="2.0" height="2.0" fill="#d8a050"/><rect x="10.1" y="3.6" width="1.8" height="1.8" fill="#d8a050"/><rect x="19.6" y="14.8" width="2.2" height="2.2" fill="#e0a060"/><rect x="5.3" y="7.9" width="1.2" height="1.2" fill="#d8a050"/><rect x="2.4" y="12.5" width="2.1" height="2.1" fill="#e0a060"/><rect x="16.9" y="28.8" width="1.0" height="1.0" fill="#d8a050"/><rect x="8.1" y="22.8" width="1.1" height="1.1" fill="#8a6810"/><rect x="10.2" y="4.5" width="2.4" height="2.4" fill="#c89838"/><rect x="19.7" y="18.7" width="2.1" height="2.1" fill="#a08020"/><rect x="22.2" y="20.0" width="2.4" height="2.4" fill="#8a6810"/><rect x="21.9" y="17.2" width="1.0" height="1.0" fill="#a08020"/><rect x="26.5" y="5.5" width="1.2" height="1.2" fill="#5a4808"/><rect x="25.5" y="15.0" width="1.6" height="1.6" fill="#c89838"/><rect x="5.7" y="26.8" width="1.6" height="1.6" fill="#e0a060"/><rect x="20.8" y="26.0" width="1.3" height="1.3" fill="#d8a050"/><rect x="2.8" y="29.4" width="2.4" height="2.4" fill="#d8a050"/><rect x="1.6" y="28.8" width="1.1" height="1.1" fill="#8a6810"/><rect x="4.4" y="18.7" width="1.4" height="1.4" fill="#c89838"/><rect x="17.1" y="14.8" width="1.9" height="1.9" fill="#a08020"/><rect x="26.7" y="14.1" width="2.1" height="2.1" fill="#a08020"/><rect x="27.7" y="28.2" width="1.5" height="1.5" fill="#5a4808"/><rect x="6.0" y="16.4" width="1.2" height="1.2" fill="#8a6810"/><rect x="19.0" y="27.4" width="2.5" height="2.5" fill="#d8a050"/><rect x="25.1" y="13.0" width="1.1" height="1.1" fill="#a08020"/><rect x="19.3" y="8.4" width="2.3" height="2.3" fill="#303010"/><rect x="18.1" y="23.7" width="2.0" height="2.0" fill="#5a4808"/><rect x="10.8" y="25.2" width="2.4" height="2.4" fill="#8a6810"/><rect x="26.6" y="20.1" width="1.1" height="1.1" fill="#a08020"/><rect x="10.3" y="14.8" width="2.5" height="2.5" fill="#d8a050"/><rect x="6.1" y="2.3" width="1.9" height="1.9" fill="#e0a060"/><rect x="18.3" y="8.2" width="2.1" height="2.1" fill="#8a6810"/><rect x="10.8" y="18.4" width="2.1" height="2.1" fill="#8a6810"/><rect x="4.4" y="29.4" width="2.3" height="2.3" fill="#303010"/><rect x="25.3" y="3.1" width="2.0" height="2.0" fill="#8a6810"/><rect x="19.0" y="1.5" width="2.6" height="2.6" fill="#a08020"/><rect x="1.3" y="21.2" width="1.6" height="1.6" fill="#8a6810"/><rect x="26.8" y="22.7" width="2.6" height="2.6" fill="#303010"/><rect x="25.9" y="19.3" width="1.1" height="1.1" fill="#5a4808"/><rect x="13.0" y="29.3" width="1.8" height="1.8" fill="#303010"/><rect x="15.8" y="17.2" width="2.3" height="2.3" fill="#d8a050"/><rect x="21.4" y="13.7" width="1.3" height="1.3" fill="#8a6810"/><rect x="14.9" y="13.7" width="1.5" height="1.5" fill="#d8a050"/><rect x="27.3" y="28.5" width="1.7" height="1.7" fill="#303010"/><rect x="22.8" y="7.1" width="1.8" height="1.8" fill="#d8a050"/><rect x="1.9" y="8.6" width="2.1" height="2.1" fill="#d8a050"/><rect x="19.6" y="18.8" width="1.1" height="1.1" fill="#d8a050"/><rect x="29.6" y="5.8" width="2.1" height="2.1" fill="#c89838"/><rect x="28.1" y="8.4" width="2.4" height="2.4" fill="#8a6810"/><rect x="15.5" y="4.3" width="1.0" height="1.0" fill="#d8a050"/><rect x="17.5" y="6.9" width="1.4" height="1.4" fill="#c89838"/><rect x="25.5" y="4.3" width="1.5" height="1.5" fill="#d8a050"/><rect x="17.5" y="20.2" width="1.1" height="1.1" fill="#a08020"/><rect x="25.6" y="6.2" width="2.2" height="2.2" fill="#a08020"/><rect x="22.9" y="24.2" width="1.3" height="1.3" fill="#a08020"/><rect x="2.0" y="10.4" width="2.2" height="2.2" fill="#d8a050"/><rect x="23.3" y="25.5" width="1.3" height="1.3" fill="#8a6810"/><rect x="7.2" y="28.7" width="2.1" height="2.1" fill="#8a6810"/><rect x="29.4" y="2.7" width="2.1" height="2.1" fill="#d8a050"/><rect x="20.4" y="25.5" width="2.4" height="2.4" fill="#c89838"/><rect x="24.1" y="12.4" width="1.9" height="1.9" fill="#e0a060"/><rect x="16.7" y="11.5" width="1.6" height="1.6" fill="#a08020"/><rect x="2.1" y="27.6" width="1.2" height="1.2" fill="#8a6810"/><rect x="7.4" y="7.9" width="2.4" height="2.4" fill="#e0a060"/><rect x="28.2" y="20.6" width="1.6" height="1.6" fill="#5a4808"/><rect x="21.5" y="28.4" width="2.6" height="2.6" fill="#8a6810"/><rect x="6.4" y="16.5" width="1.0" height="1.0" fill="#c89838"/><rect x="6.5" y="24.9" width="1.5" height="1.5" fill="#a08020"/><rect x="16.7" y="28.3" width="2.3" height="2.3" fill="#d8a050"/><rect x="24.3" y="5.7" width="2.0" height="2.0" fill="#5a4808"/><rect x="11.2" y="1.2" width="1.2" height="1.2" fill="#a08020"/><rect x="1.9" y="23.7" width="2.1" height="2.1" fill="#a08020"/><rect x="7.1" y="10.6" width="1.9" height="1.9" fill="#e0a060"/><rect x="26.9" y="15.0" width="1.8" height="1.8" fill="#a08020"/><rect x="6.3" y="18.8" width="1.5" height="1.5" fill="#e0a060"/><rect x="1.6" y="20.2" width="1.7" height="1.7" fill="#5a4808"/><rect x="24.2" y="5.0" width="1.2" height="1.2" fill="#c89838"/><rect x="18.5" y="7.8" width="1.5" height="1.5" fill="#a08020"/><rect x="19.4" y="5.9" width="2.5" height="2.5" fill="#d8a050"/><path d="M2 2 L14 15" stroke="#d8d0a8" stroke-width="1.8"/><path d="M11 16 L17 13 L24 22 L21 27 L13 22 Z" fill="#3a3010" opacity="0.6"/><path d="M10 14 L16 11 L23 20 L20 25 L12 20 Z" fill="#d8d4b8"/><path d="M12 20 L20 25" stroke="#8a8060" stroke-width="1"/><path d="M0.5 31 V3.5 Q0.5 0.5 3.5 0.5 H28.5 Q31 0.5 31 3" fill="none" stroke="#d3dfc3" stroke-width="1"/><path d="M31.5 3 V28.5 Q31.5 31.5 28.5 31.5 H3 Q1 31.5 0.8 30" fill="none" stroke="#1a2012" stroke-width="1.3"/></svg>
<svg class="a" style="left:236px;top:707px" width="32" height="32" viewBox="0 0 32 32"><rect x="1" y="1" width="30" height="30" fill="#6b7d55"/><rect x="2" y="5" width="1" height="1" fill="#3a1010"/><rect x="2" y="6" width="1" height="1" fill="#d02020"/><rect x="2" y="7" width="1" height="1" fill="#3a1010"/><rect x="2" y="8" width="1" height="1" fill="#d02020"/><rect x="2" y="9" width="1" height="1" fill="#3a1010"/><rect x="3" y="5" width="1" height="1" fill="#d02020"/><rect x="3" y="6" width="1" height="1" fill="#3a1010"/><rect x="3" y="7" width="1" height="1" fill="#d02020"/><rect x="3" y="8" width="1" height="1" fill="#3a1010"/><rect x="3" y="9" width="1" height="1" fill="#d02020"/><rect x="4" y="5" width="1" height="1" fill="#3a1010"/><rect x="4" y="6" width="1" height="1" fill="#d02020"/><rect x="4" y="7" width="1" height="1" fill="#3a1010"/><rect x="4" y="8" width="1" height="1" fill="#d02020"/><rect x="4" y="9" width="1" height="1" fill="#3a1010"/><rect x="5" y="5" width="1" height="1" fill="#d02020"/><rect x="5" y="6" width="1" height="1" fill="#3a1010"/><rect x="5" y="7" width="1" height="1" fill="#d02020"/><rect x="5" y="8" width="1" height="1" fill="#3a1010"/><rect x="5" y="9" width="1" height="1" fill="#d02020"/><rect x="6" y="5" width="1" height="1" fill="#3a1010"/><rect x="6" y="6" width="1" height="1" fill="#d02020"/><rect x="6" y="7" width="1" height="1" fill="#3a1010"/><rect x="6" y="8" width="1" height="1" fill="#d02020"/><rect x="6" y="9" width="1" height="1" fill="#3a1010"/><rect x="7" y="5" width="1" height="1" fill="#d02020"/><rect x="7" y="6" width="1" height="1" fill="#3a1010"/><rect x="7" y="7" width="1" height="1" fill="#d02020"/><rect x="7" y="8" width="1" height="1" fill="#3a1010"/><rect x="7" y="9" width="1" height="1" fill="#d02020"/><rect x="8" y="5" width="1" height="1" fill="#3a1010"/><rect x="8" y="6" width="1" height="1" fill="#d02020"/><rect x="8" y="7" width="1" height="1" fill="#3a1010"/><rect x="8" y="8" width="1" height="1" fill="#d02020"/><rect x="8" y="9" width="1" height="1" fill="#3a1010"/><rect x="9" y="5" width="1" height="1" fill="#d02020"/><rect x="9" y="6" width="1" height="1" fill="#3a1010"/><rect x="9" y="7" width="1" height="1" fill="#d02020"/><rect x="9" y="8" width="1" height="1" fill="#3a1010"/><rect x="9" y="9" width="1" height="1" fill="#d02020"/><rect x="10" y="5" width="1" height="1" fill="#3a1010"/><rect x="10" y="6" width="1" height="1" fill="#d02020"/><rect x="10" y="7" width="1" height="1" fill="#3a1010"/><rect x="10" y="8" width="1" height="1" fill="#d02020"/><rect x="10" y="9" width="1" height="1" fill="#3a1010"/><rect x="11" y="5" width="1" height="1" fill="#d02020"/><rect x="11" y="6" width="1" height="1" fill="#3a1010"/><rect x="11" y="7" width="1" height="1" fill="#d02020"/><rect x="11" y="8" width="1" height="1" fill="#3a1010"/><rect x="11" y="9" width="1" height="1" fill="#d02020"/><rect x="11" y="2" width="1" height="1" fill="#202010"/><rect x="11" y="3" width="1" height="1" fill="#e8e040"/><rect x="11" y="4" width="1" height="1" fill="#202010"/><rect x="11" y="5" width="1" height="1" fill="#e8e040"/><rect x="11" y="6" width="1" height="1" fill="#202010"/><rect x="11" y="7" width="1" height="1" fill="#e8e040"/><rect x="11" y="8" width="1" height="1" fill="#202010"/><rect x="11" y="9" width="1" height="1" fill="#e8e040"/><rect x="11" y="10" width="1" height="1" fill="#202010"/><rect x="12" y="3" width="1" height="1" fill="#202010"/><rect x="12" y="4" width="1" height="1" fill="#e8e040"/><rect x="12" y="5" width="1" height="1" fill="#202010"/><rect x="12" y="6" width="1" height="1" fill="#e8e040"/><rect x="12" y="7" width="1" height="1" fill="#202010"/><rect x="12" y="8" width="1" height="1" fill="#e8e040"/><rect x="12" y="9" width="1" height="1" fill="#202010"/><rect x="13" y="4" width="1" height="1" fill="#202010"/><rect x="13" y="5" width="1" height="1" fill="#e8e040"/><rect x="13" y="6" width="1" height="1" fill="#202010"/><rect x="13" y="7" width="1" height="1" fill="#e8e040"/><rect x="13" y="8" width="1" height="1" fill="#202010"/><rect x="14" y="5" width="1" height="1" fill="#202010"/><rect x="14" y="6" width="1" height="1" fill="#e8e040"/><rect x="14" y="7" width="1" height="1" fill="#202010"/><rect x="15" y="5" width="1" height="1" fill="#e8e040"/><rect x="15" y="6" width="1" height="1" fill="#202010"/><rect x="15" y="7" width="1" height="1" fill="#e8e040"/><rect x="16" y="6" width="1" height="1" fill="#e8e040"/><rect x="2" y="21" width="1" height="1" fill="#3a1010"/><rect x="2" y="22" width="1" height="1" fill="#d02020"/><rect x="2" y="23" width="1" height="1" fill="#3a1010"/><rect x="2" y="24" width="1" height="1" fill="#d02020"/><rect x="2" y="25" width="1" height="1" fill="#3a1010"/><rect x="3" y="21" width="1" height="1" fill="#d02020"/><rect x="3" y="22" width="1" height="1" fill="#3a1010"/><rect x="3" y="23" width="1" height="1" fill="#d02020"/><rect x="3" y="24" width="1" height="1" fill="#3a1010"/><rect x="3" y="25" width="1" height="1" fill="#d02020"/><rect x="4" y="21" width="1" height="1" fill="#3a1010"/><rect x="4" y="22" width="1" height="1" fill="#d02020"/><rect x="4" y="23" width="1" height="1" fill="#3a1010"/><rect x="4" y="24" width="1" height="1" fill="#d02020"/><rect x="4" y="25" width="1" height="1" fill="#3a1010"/><rect x="5" y="21" width="1" height="1" fill="#d02020"/><rect x="5" y="22" width="1" height="1" fill="#3a1010"/><rect x="5" y="23" width="1" height="1" fill="#d02020"/><rect x="5" y="24" width="1" height="1" fill="#3a1010"/><rect x="5" y="25" width="1" height="1" fill="#d02020"/><rect x="6" y="21" width="1" height="1" fill="#3a1010"/><rect x="6" y="22" width="1" height="1" fill="#d02020"/><rect x="6" y="23" width="1" height="1" fill="#3a1010"/><rect x="6" y="24" width="1" height="1" fill="#d02020"/><rect x="6" y="25" width="1" height="1" fill="#3a1010"/><rect x="7" y="21" width="1" height="1" fill="#d02020"/><rect x="7" y="22" width="1" height="1" fill="#3a1010"/><rect x="7" y="23" width="1" height="1" fill="#d02020"/><rect x="7" y="24" width="1" height="1" fill="#3a1010"/><rect x="7" y="25" width="1" height="1" fill="#d02020"/><rect x="8" y="21" width="1" height="1" fill="#3a1010"/><rect x="8" y="22" width="1" height="1" fill="#d02020"/><rect x="8" y="23" width="1" height="1" fill="#3a1010"/><rect x="8" y="24" width="1" height="1" fill="#d02020"/><rect x="8" y="25" width="1" height="1" fill="#3a1010"/><rect x="9" y="21" width="1" height="1" fill="#d02020"/><rect x="9" y="22" width="1" height="1" fill="#3a1010"/><rect x="9" y="23" width="1" height="1" fill="#d02020"/><rect x="9" y="24" width="1" height="1" fill="#3a1010"/><rect x="9" y="25" width="1" height="1" fill="#d02020"/><rect x="10" y="21" width="1" height="1" fill="#3a1010"/><rect x="10" y="22" width="1" height="1" fill="#d02020"/><rect x="10" y="23" width="1" height="1" fill="#3a1010"/><rect x="10" y="24" width="1" height="1" fill="#d02020"/><rect x="10" y="25" width="1" height="1" fill="#3a1010"/><rect x="11" y="21" width="1" height="1" fill="#d02020"/><rect x="11" y="22" width="1" height="1" fill="#3a1010"/><rect x="11" y="23" width="1" height="1" fill="#d02020"/><rect x="11" y="24" width="1" height="1" fill="#3a1010"/><rect x="11" y="25" width="1" height="1" fill="#d02020"/><rect x="12" y="21" width="1" height="1" fill="#3a1010"/><rect x="12" y="22" width="1" height="1" fill="#d02020"/><rect x="12" y="23" width="1" height="1" fill="#3a1010"/><rect x="12" y="24" width="1" height="1" fill="#d02020"/><rect x="12" y="25" width="1" height="1" fill="#3a1010"/><rect x="13" y="21" width="1" height="1" fill="#d02020"/><rect x="13" y="22" width="1" height="1" fill="#3a1010"/><rect x="13" y="23" width="1" height="1" fill="#d02020"/><rect x="13" y="24" width="1" height="1" fill="#3a1010"/><rect x="13" y="25" width="1" height="1" fill="#d02020"/><rect x="14" y="21" width="1" height="1" fill="#3a1010"/><rect x="14" y="22" width="1" height="1" fill="#d02020"/><rect x="14" y="23" width="1" height="1" fill="#3a1010"/><rect x="14" y="24" width="1" height="1" fill="#d02020"/><rect x="14" y="25" width="1" height="1" fill="#3a1010"/><rect x="15" y="21" width="1" height="1" fill="#d02020"/><rect x="15" y="22" width="1" height="1" fill="#3a1010"/><rect x="15" y="23" width="1" height="1" fill="#d02020"/><rect x="15" y="24" width="1" height="1" fill="#3a1010"/><rect x="15" y="25" width="1" height="1" fill="#d02020"/><rect x="16" y="21" width="1" height="1" fill="#3a1010"/><rect x="16" y="22" width="1" height="1" fill="#d02020"/><rect x="16" y="23" width="1" height="1" fill="#3a1010"/><rect x="16" y="24" width="1" height="1" fill="#d02020"/><rect x="16" y="25" width="1" height="1" fill="#3a1010"/><rect x="17" y="21" width="1" height="1" fill="#d02020"/><rect x="17" y="22" width="1" height="1" fill="#3a1010"/><rect x="17" y="23" width="1" height="1" fill="#d02020"/><rect x="17" y="24" width="1" height="1" fill="#3a1010"/><rect x="17" y="25" width="1" height="1" fill="#d02020"/><rect x="18" y="18" width="1" height="1" fill="#f0e840"/><rect x="18" y="19" width="1" height="1" fill="#101008"/><rect x="18" y="20" width="1" height="1" fill="#f0e840"/><rect x="18" y="21" width="1" height="1" fill="#101008"/><rect x="18" y="22" width="1" height="1" fill="#f0e840"/><rect x="18" y="23" width="1" height="1" fill="#101008"/><rect x="18" y="24" width="1" height="1" fill="#f0e840"/><rect x="18" y="25" width="1" height="1" fill="#101008"/><rect x="18" y="26" width="1" height="1" fill="#f0e840"/><rect x="18" y="27" width="1" height="1" fill="#101008"/><rect x="18" y="28" width="1" height="1" fill="#f0e840"/><rect x="19" y="19" width="1" height="1" fill="#f0e840"/><rect x="19" y="20" width="1" height="1" fill="#101008"/><rect x="19" y="21" width="1" height="1" fill="#f0e840"/><rect x="19" y="22" width="1" height="1" fill="#101008"/><rect x="19" y="23" width="1" height="1" fill="#f0e840"/><rect x="19" y="24" width="1" height="1" fill="#101008"/><rect x="19" y="25" width="1" height="1" fill="#f0e840"/><rect x="19" y="26" width="1" height="1" fill="#101008"/><rect x="19" y="27" width="1" height="1" fill="#f0e840"/><rect x="20" y="19" width="1" height="1" fill="#101008"/><rect x="20" y="20" width="1" height="1" fill="#f0e840"/><rect x="20" y="21" width="1" height="1" fill="#101008"/><rect x="20" y="22" width="1" height="1" fill="#f0e840"/><rect x="20" y="23" width="1" height="1" fill="#101008"/><rect x="20" y="24" width="1" height="1" fill="#f0e840"/><rect x="20" y="25" width="1" height="1" fill="#101008"/><rect x="20" y="26" width="1" height="1" fill="#f0e840"/><rect x="20" y="27" width="1" height="1" fill="#101008"/><rect x="21" y="20" width="1" height="1" fill="#101008"/><rect x="21" y="21" width="1" height="1" fill="#f0e840"/><rect x="21" y="22" width="1" height="1" fill="#101008"/><rect x="21" y="23" width="1" height="1" fill="#f0e840"/><rect x="21" y="24" width="1" height="1" fill="#101008"/><rect x="21" y="25" width="1" height="1" fill="#f0e840"/><rect x="21" y="26" width="1" height="1" fill="#101008"/><rect x="22" y="20" width="1" height="1" fill="#f0e840"/><rect x="22" y="21" width="1" height="1" fill="#101008"/><rect x="22" y="22" width="1" height="1" fill="#f0e840"/><rect x="22" y="23" width="1" height="1" fill="#101008"/><rect x="22" y="24" width="1" height="1" fill="#f0e840"/><rect x="22" y="25" width="1" height="1" fill="#101008"/><rect x="22" y="26" width="1" height="1" fill="#f0e840"/><rect x="23" y="20" width="1" height="1" fill="#101008"/><rect x="23" y="21" width="1" height="1" fill="#f0e840"/><rect x="23" y="22" width="1" height="1" fill="#101008"/><rect x="23" y="23" width="1" height="1" fill="#f0e840"/><rect x="23" y="24" width="1" height="1" fill="#101008"/><rect x="23" y="25" width="1" height="1" fill="#f0e840"/><rect x="23" y="26" width="1" height="1" fill="#101008"/><rect x="24" y="21" width="1" height="1" fill="#101008"/><rect x="24" y="22" width="1" height="1" fill="#f0e840"/><rect x="24" y="23" width="1" height="1" fill="#101008"/><rect x="24" y="24" width="1" height="1" fill="#f0e840"/><rect x="24" y="25" width="1" height="1" fill="#101008"/><rect x="25" y="21" width="1" height="1" fill="#f0e840"/><rect x="25" y="22" width="1" height="1" fill="#101008"/><rect x="25" y="23" width="1" height="1" fill="#f0e840"/><rect x="25" y="24" width="1" height="1" fill="#101008"/><rect x="25" y="25" width="1" height="1" fill="#f0e840"/><rect x="26" y="22" width="1" height="1" fill="#f0e840"/><rect x="26" y="23" width="1" height="1" fill="#101008"/><rect x="26" y="24" width="1" height="1" fill="#f0e840"/><rect x="27" y="22" width="1" height="1" fill="#101008"/><rect x="27" y="23" width="1" height="1" fill="#f0e840"/><rect x="27" y="24" width="1" height="1" fill="#101008"/><rect x="28" y="23" width="1" height="1" fill="#101008"/><rect x="29" y="23" width="1" height="1" fill="#f0e840"/><path d="M8 27 L12 22 L14 16 L18 10 L20 6 L22 7 L21 11 L23 14 L27 13 L27 15 L22 17 L19 15 L17 21 L12 28 Z" fill="#6a4a28"/><path d="M14 16 L18 12 L20 15 L16 19 Z" fill="#2a1a08"/><path d="M0.5 31 V3.5 Q0.5 0.5 3.5 0.5 H28.5 Q31 0.5 31 3" fill="none" stroke="#d3dfc3" stroke-width="1"/><path d="M31.5 3 V28.5 Q31.5 31.5 28.5 31.5 H3 Q1 31.5 0.8 30" fill="none" stroke="#1a2012" stroke-width="1.3"/></svg>
<svg class="a" style="left:270px;top:707px" width="32" height="32" viewBox="0 0 32 32"><rect x="1" y="1" width="30" height="30" fill="#6b7d55"/><path d="M1 1 H31 L1 31 Z" fill="#b4c4ac"/><path d="M31 8 V31 H10 Z" fill="#0e0e0e"/><path d="M4 10 H30 V15 H4 Z" fill="#1a1a1a"/><path d="M8 16 H30" stroke="#b4c4ac" stroke-width="1"/><path d="M3 9 V15" stroke="#111" stroke-width="1.5"/><circle cx="17" cy="17" r="11.5" fill="none" stroke="#d81818" stroke-width="2.2"/><path d="M17 2 V31 M2 17 H30" stroke="#d81818" stroke-width="1.2"/><path d="M0.5 31 V3.5 Q0.5 0.5 3.5 0.5 H28.5 Q31 0.5 31 3" fill="none" stroke="#d3dfc3" stroke-width="1"/><path d="M31.5 3 V28.5 Q31.5 31.5 28.5 31.5 H3 Q1 31.5 0.8 30" fill="none" stroke="#1a2012" stroke-width="1.3"/></svg>
<svg class="a" style="left:304px;top:707px" width="32" height="32" viewBox="0 0 32 32"><rect x="1" y="1" width="30" height="30" fill="#6b7d55"/><path d="M1 2 H19 L5 28 H1 Z" fill="#4e4e52"/><path d="M19 2 H31 V20 L24 20 Z" fill="#b8c0ac"/><path d="M19 2 L22 2 L8 30 L4 30 Z" fill="#101010"/><path d="M22 13 L25 15 L10 30 L6 28 Z" fill="#101010"/><circle cx="10" cy="24" r="5.2" fill="#0c0c0c"/><path d="M3 27 Q3 20 9 19" stroke="#e0e0d8" stroke-width="1" fill="none"/><path d="M17 3 L19 2 L22 5 L24 3 L27 4 L28 8 L27 11 L30 19 L28 20 L25 14 L24 20 L21 20 L22 12 L19 8 Z" fill="#0c0c0c"/><path d="M0.5 31 V3.5 Q0.5 0.5 3.5 0.5 H28.5 Q31 0.5 31 3" fill="none" stroke="#d3dfc3" stroke-width="1"/><path d="M31.5 3 V28.5 Q31.5 31.5 28.5 31.5 H3 Q1 31.5 0.8 30" fill="none" stroke="#1a2012" stroke-width="1.3"/></svg>
<svg class="a" style="left:338px;top:707px" width="32" height="32" viewBox="0 0 32 32"><rect x="1" y="1" width="30" height="30" fill="#6b7d55"/><rect x="7.6" y="28.9" width="1.3" height="1.3" fill="#3a2810"/><rect x="2.3" y="5.0" width="2.6" height="2.6" fill="#d8c8a0"/><rect x="14.3" y="14.1" width="1.9" height="1.9" fill="#806040"/><rect x="15.1" y="23.0" width="1.4" height="1.4" fill="#a08050"/><rect x="12.8" y="27.2" width="2.2" height="2.2" fill="#806040"/><rect x="20.2" y="3.8" width="1.1" height="1.1" fill="#d8c8a0"/><rect x="19.0" y="11.9" width="1.1" height="1.1" fill="#a08050"/><rect x="7.8" y="3.5" width="1.8" height="1.8" fill="#a08050"/><rect x="7.0" y="24.4" width="1.1" height="1.1" fill="#201808"/><rect x="6.6" y="28.4" width="1.7" height="1.7" fill="#201808"/><rect x="17.9" y="13.9" width="1.6" height="1.6" fill="#201808"/><rect x="21.0" y="21.4" width="2.3" height="2.3" fill="#a08050"/><rect x="15.6" y="6.7" width="1.6" height="1.6" fill="#3a2810"/><rect x="9.2" y="20.1" width="2.4" height="2.4" fill="#d8c8a0"/><rect x="15.7" y="21.3" width="1.6" height="1.6" fill="#3a2810"/><rect x="7.4" y="2.0" width="1.6" height="1.6" fill="#e0c890"/><rect x="25.2" y="26.9" width="2.1" height="2.1" fill="#3a2810"/><rect x="4.4" y="28.0" width="2.6" height="2.6" fill="#d8c8a0"/><rect x="9.7" y="1.4" width="1.6" height="1.6" fill="#d8c8a0"/><rect x="17.4" y="12.8" width="1.9" height="1.9" fill="#c8a870"/><rect x="9.4" y="3.8" width="2.1" height="2.1" fill="#c8a870"/><rect x="5.5" y="28.2" width="2.1" height="2.1" fill="#806040"/><rect x="1.5" y="5.1" width="2.1" height="2.1" fill="#806040"/><rect x="4.5" y="9.7" width="2.5" height="2.5" fill="#e0c890"/><rect x="1.1" y="25.2" width="1.1" height="1.1" fill="#3a2810"/><rect x="18.9" y="26.6" width="2.2" height="2.2" fill="#d8c8a0"/><rect x="6.2" y="29.1" width="1.2" height="1.2" fill="#806040"/><rect x="6.8" y="7.5" width="1.8" height="1.8" fill="#d8c8a0"/><rect x="5.5" y="4.5" width="2.2" height="2.2" fill="#201808"/><rect x="19.8" y="21.9" width="2.2" height="2.2" fill="#201808"/><rect x="21.7" y="14.7" width="2.3" height="2.3" fill="#806040"/><rect x="14.2" y="2.5" width="1.7" height="1.7" fill="#c8a870"/><rect x="21.5" y="18.7" width="2.0" height="2.0" fill="#c8a870"/><rect x="29.4" y="22.7" width="1.8" height="1.8" fill="#201808"/><rect x="21.4" y="6.8" width="1.5" height="1.5" fill="#3a2810"/><rect x="12.1" y="16.1" width="1.0" height="1.0" fill="#3a2810"/><rect x="18.8" y="27.4" width="1.5" height="1.5" fill="#a08050"/><rect x="19.3" y="3.3" width="2.6" height="2.6" fill="#806040"/><rect x="11.7" y="28.3" width="1.5" height="1.5" fill="#d8c8a0"/><rect x="9.8" y="25.1" width="2.3" height="2.3" fill="#e0c890"/><rect x="9.6" y="25.5" width="1.8" height="1.8" fill="#3a2810"/><rect x="12.0" y="18.0" width="1.3" height="1.3" fill="#e0c890"/><rect x="12.5" y="12.1" width="1.8" height="1.8" fill="#a08050"/><rect x="21.0" y="11.3" width="2.0" height="2.0" fill="#a08050"/><rect x="11.5" y="13.4" width="2.3" height="2.3" fill="#806040"/><rect x="15.7" y="3.4" width="1.1" height="1.1" fill="#3a2810"/><rect x="13.2" y="4.4" width="2.3" height="2.3" fill="#d8c8a0"/><rect x="8.1" y="8.1" width="2.3" height="2.3" fill="#3a2810"/><rect x="23.6" y="24.0" width="1.1" height="1.1" fill="#806040"/><rect x="6.0" y="17.4" width="2.5" height="2.5" fill="#806040"/><rect x="18.7" y="20.9" width="1.2" height="1.2" fill="#c8a870"/><rect x="14.3" y="20.4" width="2.5" height="2.5" fill="#e0c890"/><rect x="10.3" y="2.1" width="2.4" height="2.4" fill="#c8a870"/><rect x="20.0" y="11.6" width="1.1" height="1.1" fill="#d8c8a0"/><rect x="7.7" y="2.1" width="1.5" height="1.5" fill="#d8c8a0"/><rect x="9.6" y="11.4" width="1.1" height="1.1" fill="#e0c890"/><rect x="27.1" y="27.6" width="1.6" height="1.6" fill="#201808"/><rect x="5.6" y="8.4" width="1.2" height="1.2" fill="#806040"/><rect x="16.5" y="3.4" width="1.5" height="1.5" fill="#3a2810"/><rect x="6.8" y="28.4" width="1.9" height="1.9" fill="#c8a870"/><rect x="22.3" y="24.9" width="2.0" height="2.0" fill="#201808"/><rect x="9.6" y="8.0" width="1.8" height="1.8" fill="#201808"/><rect x="17.3" y="28.1" width="2.5" height="2.5" fill="#3a2810"/><rect x="4.8" y="10.5" width="1.3" height="1.3" fill="#806040"/><rect x="4.9" y="13.8" width="2.4" height="2.4" fill="#a08050"/><rect x="18.0" y="18.8" width="2.3" height="2.3" fill="#806040"/><rect x="13.7" y="20.9" width="2.5" height="2.5" fill="#a08050"/><rect x="21.1" y="29.5" width="2.4" height="2.4" fill="#806040"/><rect x="22.3" y="23.6" width="1.5" height="1.5" fill="#3a2810"/><rect x="20.7" y="14.8" width="2.3" height="2.3" fill="#3a2810"/><rect x="9.0" y="19.4" width="1.9" height="1.9" fill="#201808"/><rect x="7.3" y="16.3" width="1.2" height="1.2" fill="#d8c8a0"/><rect x="15.2" y="14.8" width="1.6" height="1.6" fill="#e0c890"/><rect x="2.0" y="11.8" width="1.6" height="1.6" fill="#e0c890"/><rect x="21.3" y="19.0" width="2.3" height="2.3" fill="#3a2810"/><rect x="1.4" y="25.0" width="1.9" height="1.9" fill="#806040"/><rect x="4.7" y="29.0" width="1.9" height="1.9" fill="#806040"/><rect x="17.8" y="26.4" width="2.6" height="2.6" fill="#e0c890"/><rect x="20.0" y="29.6" width="1.2" height="1.2" fill="#e0c890"/><rect x="10.3" y="4.0" width="1.3" height="1.3" fill="#d8c8a0"/><rect x="7.8" y="11.6" width="2.5" height="2.5" fill="#e0c890"/><rect x="22.5" y="20.4" width="1.2" height="1.2" fill="#a08050"/><rect x="21.6" y="26.8" width="1.1" height="1.1" fill="#e0c890"/><rect x="15.0" y="14.8" width="1.5" height="1.5" fill="#3a2810"/><rect x="19.8" y="23.8" width="1.7" height="1.7" fill="#d8c8a0"/><rect x="9.3" y="20.8" width="2.3" height="2.3" fill="#806040"/><rect x="9.4" y="25.9" width="2.1" height="2.1" fill="#806040"/><rect x="3.6" y="27.0" width="1.5" height="1.5" fill="#806040"/><rect x="17.8" y="22.4" width="2.1" height="2.1" fill="#e0c890"/><rect x="20.3" y="11.5" width="1.6" height="1.6" fill="#201808"/><rect x="16.9" y="21.6" width="2.3" height="2.3" fill="#3a2810"/><rect x="15.6" y="2.0" width="2.3" height="2.3" fill="#201808"/><rect x="19.4" y="8.3" width="1.3" height="1.3" fill="#d8c8a0"/><rect x="4.4" y="2.1" width="2.3" height="2.3" fill="#a08050"/><rect x="10.2" y="1.8" width="2.2" height="2.2" fill="#c8a870"/><rect x="19.6" y="1.3" width="1.3" height="1.3" fill="#d8c8a0"/><rect x="10.2" y="3.7" width="2.5" height="2.5" fill="#3a2810"/><rect x="1.0" y="29.4" width="1.8" height="1.8" fill="#c8a870"/><rect x="6.9" y="27.6" width="2.1" height="2.1" fill="#d8c8a0"/><rect x="29.5" y="27.3" width="1.8" height="1.8" fill="#806040"/><rect x="23.6" y="23.8" width="1.6" height="1.6" fill="#a08050"/><rect x="18.3" y="20.0" width="1.7" height="1.7" fill="#e0c890"/><rect x="20.2" y="29.7" width="1.1" height="1.1" fill="#e0c890"/><rect x="15.2" y="21.2" width="1.1" height="1.1" fill="#3a2810"/><rect x="9.9" y="9.0" width="1.6" height="1.6" fill="#c8a870"/><rect x="21.3" y="6.5" width="2.2" height="2.2" fill="#d8c8a0"/><rect x="29.7" y="28.2" width="1.2" height="1.2" fill="#806040"/><rect x="26.9" y="24.9" width="2.1" height="2.1" fill="#201808"/><rect x="27.4" y="26.2" width="2.0" height="2.0" fill="#e0c890"/><rect x="18.9" y="14.6" width="1.8" height="1.8" fill="#3a2810"/><rect x="10.8" y="28.4" width="1.4" height="1.4" fill="#201808"/><rect x="18.3" y="6.8" width="1.2" height="1.2" fill="#a08050"/><rect x="10.4" y="17.6" width="1.4" height="1.4" fill="#a08050"/><rect x="18.2" y="25.4" width="1.6" height="1.6" fill="#e0c890"/><rect x="12.2" y="25.9" width="2.4" height="2.4" fill="#a08050"/><rect x="12.9" y="1.3" width="1.9" height="1.9" fill="#e0c890"/><rect x="26.6" y="29.3" width="1.0" height="1.0" fill="#3a2810"/><rect x="20.9" y="10.2" width="1.8" height="1.8" fill="#a08050"/><rect x="17.8" y="18.7" width="1.1" height="1.1" fill="#c8a870"/><rect x="13.9" y="3.4" width="1.3" height="1.3" fill="#c8a870"/><rect x="19.3" y="3.2" width="1.6" height="1.6" fill="#e0c890"/><rect x="21.6" y="27.8" width="1.3" height="1.3" fill="#201808"/><rect x="15.2" y="24.1" width="2.5" height="2.5" fill="#a08050"/><rect x="8.1" y="24.3" width="2.3" height="2.3" fill="#a08050"/><rect x="19.9" y="28.3" width="1.8" height="1.8" fill="#201808"/><rect x="4.4" y="27.8" width="2.3" height="2.3" fill="#201808"/><rect x="6.0" y="10.6" width="1.9" height="1.9" fill="#e0c890"/><rect x="14.0" y="6.3" width="2.2" height="2.2" fill="#3a2810"/><rect x="26.7" y="29.5" width="1.8" height="1.8" fill="#e0c890"/><rect x="20.7" y="18.6" width="1.1" height="1.1" fill="#e0c890"/><rect x="8.2" y="25.2" width="1.8" height="1.8" fill="#a08050"/><rect x="9.3" y="28.3" width="1.9" height="1.9" fill="#806040"/><rect x="19.9" y="19.3" width="1.1" height="1.1" fill="#e0c890"/><rect x="12.5" y="16.9" width="1.3" height="1.3" fill="#3a2810"/><rect x="15.1" y="17.5" width="1.3" height="1.3" fill="#a08050"/><rect x="8.2" y="12.0" width="1.6" height="1.6" fill="#201808"/><rect x="4.5" y="16.0" width="1.1" height="1.1" fill="#201808"/><rect x="8.4" y="27.3" width="1.3" height="1.3" fill="#c8a870"/><rect x="15.1" y="17.5" width="2.1" height="2.1" fill="#c8a870"/><rect x="4.8" y="11.2" width="1.7" height="1.7" fill="#806040"/><rect x="10.7" y="16.1" width="1.7" height="1.7" fill="#a08050"/><rect x="4.2" y="12.0" width="2.0" height="2.0" fill="#a08050"/><rect x="25.2" y="23.5" width="1.3" height="1.3" fill="#a08050"/><rect x="13.9" y="9.0" width="2.3" height="2.3" fill="#201808"/><rect x="25.2" y="27.5" width="2.5" height="2.5" fill="#3a2810"/><rect x="1.0" y="26.8" width="1.1" height="1.1" fill="#e0c890"/><rect x="5.8" y="10.3" width="2.4" height="2.4" fill="#d8c8a0"/><rect x="7.4" y="27.6" width="1.2" height="1.2" fill="#201808"/><rect x="5.5" y="2.9" width="1.3" height="1.3" fill="#d8c8a0"/><rect x="5.3" y="9.4" width="1.6" height="1.6" fill="#201808"/><rect x="13.8" y="9.4" width="1.6" height="1.6" fill="#c8a870"/><rect x="15.0" y="7.8" width="2.5" height="2.5" fill="#c8a870"/><rect x="17.8" y="3.9" width="2.5" height="2.5" fill="#201808"/><rect x="11.5" y="21.4" width="2.2" height="2.2" fill="#c8a870"/><rect x="29.9" y="21.4" width="2.0" height="2.0" fill="#c8a870"/><rect x="6.1" y="2.9" width="2.5" height="2.5" fill="#806040"/><rect x="2.5" y="1.5" width="2.4" height="2.4" fill="#a08050"/><rect x="10.2" y="8.2" width="2.4" height="2.4" fill="#e0c890"/><rect x="11.3" y="15.6" width="1.6" height="1.6" fill="#201808"/><rect x="3.4" y="29.3" width="2.0" height="2.0" fill="#d8c8a0"/><rect x="6.5" y="7.9" width="2.0" height="2.0" fill="#c8a870"/><rect x="13.2" y="6.6" width="2.2" height="2.2" fill="#c8a870"/><rect x="10.2" y="15.5" width="2.6" height="2.6" fill="#3a2810"/><rect x="28.1" y="26.7" width="1.6" height="1.6" fill="#201808"/><rect x="16.3" y="25.9" width="2.6" height="2.6" fill="#e0c890"/><rect x="23.9" y="29.6" width="2.1" height="2.1" fill="#a08050"/><rect x="9.7" y="16.8" width="1.0" height="1.0" fill="#3a2810"/><circle cx="19" cy="11" r="3.8" fill="#f0b818"/><circle cx="19" cy="11" r="2" fill="#fff070"/><circle cx="11" cy="17" r="3.2" fill="#f0c828"/><circle cx="11" cy="17" r="1.6" fill="#fff890"/><circle cx="17.5" cy="26" r="3.5" fill="#f0c820"/><circle cx="17.5" cy="26" r="1.8" fill="#fff880"/><path d="M0.5 31 V3.5 Q0.5 0.5 3.5 0.5 H28.5 Q31 0.5 31 3" fill="none" stroke="#d3dfc3" stroke-width="1"/><path d="M31.5 3 V28.5 Q31.5 31.5 28.5 31.5 H3 Q1 31.5 0.8 30" fill="none" stroke="#1a2012" stroke-width="1.3"/></svg>
<svg class="a" style="left:372px;top:707px" width="32" height="32" viewBox="0 0 32 32"><rect x="1" y="1" width="30" height="30" fill="#6b7d55"/><path d="M3 4 L15 12" stroke="#9ac0a0" stroke-width="4" stroke-dasharray="1.2 1.3" opacity="0.7"/><path d="M2 12 L10 12 L19 17 L17 22 L8 19 Z" fill="#e8d0d0"/><path d="M3 16 L12 21" stroke="#c0a0a8" stroke-width="2"/><path d="M4 13 L15 15" stroke="#b89098" stroke-width="1"/><path d="M15 15 L19 17 L17 22 L13 20 Z" fill="#e8d020"/><path d="M19 15 L23 17 L21 23 L17 21 Z" fill="#208040"/><path d="M21 17 L26 19 L24 24 L20 22 Z" fill="#203890"/><path d="M24 18 L29 21 L26 27 L22 24 Z" fill="#181818"/><path d="M25 24 L30 26 L28 30 L24 27 Z" fill="#d02020"/><path d="M0.5 31 V3.5 Q0.5 0.5 3.5 0.5 H28.5 Q31 0.5 31 3" fill="none" stroke="#d3dfc3" stroke-width="1"/><path d="M31.5 3 V28.5 Q31.5 31.5 28.5 31.5 H3 Q1 31.5 0.8 30" fill="none" stroke="#1a2012" stroke-width="1.3"/></svg>
<svg class="a" style="left:406px;top:707px" width="32" height="32" viewBox="0 0 32 32"><rect x="1" y="1" width="30" height="30" fill="#6b7d55"/><rect x="7" y="2" width="19" height="15" fill="#e8e8e8" stroke="#202020" stroke-width="0.8"/><rect x="9" y="4" width="14" height="10" fill="#080808"/><path d="M25 3 V17" stroke="#707070" stroke-width="1"/><rect x="4" y="19" width="24" height="9" fill="#e8e8e8"/><path d="M2 29 L4 22 H28 L30 29 Z" fill="#e0e0e0" stroke="#303030" stroke-width="0.8"/><path d="M15 21 H26" stroke="#303030" stroke-width="1.2"/><path d="M4 26 H28" stroke="#202020" stroke-width="1.6" stroke-dasharray="1.2 1.2"/><path d="M0.5 31 V3.5 Q0.5 0.5 3.5 0.5 H28.5 Q31 0.5 31 3" fill="none" stroke="#d3dfc3" stroke-width="1"/><path d="M31.5 3 V28.5 Q31.5 31.5 28.5 31.5 H3 Q1 31.5 0.8 30" fill="none" stroke="#1a2012" stroke-width="1.3"/></svg>
<svg class="a" style="left:488px;top:707px" width="32" height="32" viewBox="0 0 32 32"><rect x="1" y="1" width="30" height="30" fill="#6b7d55"/><defs><clipPath id="mg"><circle cx="14.5" cy="14" r="10"/></clipPath></defs><circle cx="14.5" cy="14" r="10" fill="#6e746a"/><g clip-path="url(#mg)"><path d="M-10 0 L10 28" stroke="#9aa094" stroke-width="0.7"/><path d="M-8 0 L12 28" stroke="#9aa094" stroke-width="0.7"/><path d="M-6 0 L14 28" stroke="#9aa094" stroke-width="0.7"/><path d="M-4 0 L16 28" stroke="#9aa094" stroke-width="0.7"/><path d="M-2 0 L18 28" stroke="#9aa094" stroke-width="0.7"/><path d="M0 0 L20 28" stroke="#9aa094" stroke-width="0.7"/><path d="M2 0 L22 28" stroke="#9aa094" stroke-width="0.7"/><path d="M4 0 L24 28" stroke="#9aa094" stroke-width="0.7"/><path d="M6 0 L26 28" stroke="#9aa094" stroke-width="0.7"/><path d="M8 0 L28 28" stroke="#9aa094" stroke-width="0.7"/><path d="M10 0 L30 28" stroke="#9aa094" stroke-width="0.7"/><path d="M12 0 L32 28" stroke="#9aa094" stroke-width="0.7"/><path d="M14 0 L34 28" stroke="#9aa094" stroke-width="0.7"/><path d="M16 0 L36 28" stroke="#9aa094" stroke-width="0.7"/><path d="M18 0 L38 28" stroke="#9aa094" stroke-width="0.7"/><path d="M20 0 L40 28" stroke="#9aa094" stroke-width="0.7"/></g><circle cx="14.5" cy="14" r="10.5" fill="none" stroke="#0a0a0a" stroke-width="2.2"/><path d="M22 22 L29 29" stroke="#0a0a0a" stroke-width="4.2" stroke-linecap="round"/><path d="M0.5 31 V3.5 Q0.5 0.5 3.5 0.5 H28.5 Q31 0.5 31 3" fill="none" stroke="#d3dfc3" stroke-width="1"/><path d="M31.5 3 V28.5 Q31.5 31.5 28.5 31.5 H3 Q1 31.5 0.8 30" fill="none" stroke="#1a2012" stroke-width="1.3"/></svg>
<svg class="a" style="left:522px;top:707px" width="32" height="32" viewBox="0 0 32 32"><rect x="1" y="1" width="30" height="30" fill="#6b7d55"/><ellipse cx="16" cy="22" rx="13.5" ry="6" fill="#6b7d55" stroke="#0a0a0a" stroke-width="1.3"/><ellipse cx="16" cy="19" rx="13.5" ry="6" fill="#6e8058" stroke="#0a0a0a" stroke-width="1.3"/><path d="M12 8 Q16 5 20 8 L17 10 Z" fill="#d8d8d0"/><circle cx="15.5" cy="4" r="1.6" fill="#d0d0c8" stroke="#303030" stroke-width="0.5"/><path d="M14 10 L17 10 L17 16 L15 22 L13 21 Z" fill="#c8c8c0"/><path d="M17 16 L20 21 L18 22 L16 19 Z" fill="#303028"/><path d="M0.5 31 V3.5 Q0.5 0.5 3.5 0.5 H28.5 Q31 0.5 31 3" fill="none" stroke="#d3dfc3" stroke-width="1"/><path d="M31.5 3 V28.5 Q31.5 31.5 28.5 31.5 H3 Q1 31.5 0.8 30" fill="none" stroke="#1a2012" stroke-width="1.3"/></svg>
<svg class="a" style="left:556px;top:707px" width="32" height="32" viewBox="0 0 32 32"><rect x="1" y="1" width="30" height="30" fill="#9ab050"/><rect x="8.5" y="20.9" width="3.1" height="3.1" fill="#2a5a30"/><rect x="26.8" y="19.9" width="1.8" height="1.8" fill="#2a5a30"/><rect x="7.5" y="22.3" width="1.6" height="1.6" fill="#6a9040"/><rect x="25.5" y="22.6" width="2.4" height="2.4" fill="#c0c860"/><rect x="25.3" y="18.6" width="3.5" height="3.5" fill="#c0c860"/><rect x="25.2" y="3.5" width="3.1" height="3.1" fill="#508868"/><rect x="24.4" y="25.0" width="2.4" height="2.4" fill="#2a5a30"/><rect x="5.0" y="26.4" width="3.2" height="3.2" fill="#3a7038"/><rect x="15.1" y="22.9" width="3.5" height="3.5" fill="#98b050"/><rect x="20.5" y="26.8" width="2.1" height="2.1" fill="#2a5a30"/><rect x="4.4" y="24.8" width="2.8" height="2.8" fill="#508868"/><rect x="8.6" y="14.0" width="3.0" height="3.0" fill="#98b050"/><rect x="4.9" y="20.6" width="2.6" height="2.6" fill="#d8d870"/><rect x="9.5" y="6.2" width="2.0" height="2.0" fill="#3a7038"/><rect x="14.3" y="18.6" width="3.3" height="3.3" fill="#d8d870"/><rect x="17.7" y="17.0" width="2.0" height="2.0" fill="#98b050"/><rect x="6.6" y="11.6" width="2.4" height="2.4" fill="#c0c860"/><rect x="19.2" y="14.4" width="2.9" height="2.9" fill="#c0c860"/><rect x="28.1" y="2.3" width="2.5" height="2.5" fill="#6a9040"/><rect x="21.2" y="13.9" width="1.8" height="1.8" fill="#3a7038"/><rect x="13.0" y="26.2" width="3.1" height="3.1" fill="#508868"/><rect x="6.9" y="25.8" width="2.5" height="2.5" fill="#3a7038"/><rect x="20.0" y="27.1" width="2.7" height="2.7" fill="#2a5a30"/><rect x="22.0" y="7.1" width="1.6" height="1.6" fill="#98b050"/><rect x="21.4" y="2.1" width="3.0" height="3.0" fill="#98b050"/><rect x="10.9" y="9.6" width="3.1" height="3.1" fill="#6a9040"/><rect x="17.1" y="27.1" width="1.6" height="1.6" fill="#6a9040"/><rect x="19.7" y="17.1" width="2.9" height="2.9" fill="#98b050"/><rect x="29.2" y="24.9" width="1.7" height="1.7" fill="#2a5a30"/><rect x="1.1" y="29.9" width="2.3" height="2.3" fill="#c0c860"/><rect x="27.3" y="17.4" width="1.7" height="1.7" fill="#2a5a30"/><rect x="14.6" y="11.6" width="1.6" height="1.6" fill="#508868"/><rect x="10.3" y="5.5" width="3.4" height="3.4" fill="#98b050"/><rect x="16.0" y="14.8" width="1.9" height="1.9" fill="#2a5a30"/><rect x="24.2" y="11.9" width="3.3" height="3.3" fill="#2a5a30"/><rect x="22.4" y="8.5" width="3.1" height="3.1" fill="#2a5a30"/><rect x="7.2" y="13.3" width="2.2" height="2.2" fill="#6a9040"/><rect x="8.1" y="9.3" width="2.8" height="2.8" fill="#6a9040"/><rect x="13.3" y="10.2" width="1.7" height="1.7" fill="#d8d870"/><rect x="23.0" y="18.4" width="2.8" height="2.8" fill="#c0c860"/><rect x="9.9" y="14.0" width="2.3" height="2.3" fill="#98b050"/><rect x="2.8" y="16.3" width="1.8" height="1.8" fill="#6a9040"/><rect x="2.5" y="11.7" width="1.9" height="1.9" fill="#6a9040"/><rect x="9.8" y="12.3" width="2.2" height="2.2" fill="#c0c860"/><rect x="3.9" y="15.2" width="3.3" height="3.3" fill="#98b050"/><rect x="29.7" y="2.3" width="2.1" height="2.1" fill="#98b050"/><rect x="29.1" y="2.4" width="3.3" height="3.3" fill="#6a9040"/><rect x="16.8" y="4.6" width="3.3" height="3.3" fill="#c0c860"/><rect x="27.5" y="20.8" width="2.5" height="2.5" fill="#c0c860"/><rect x="11.8" y="11.0" width="3.1" height="3.1" fill="#508868"/><rect x="2.4" y="7.9" width="3.4" height="3.4" fill="#508868"/><rect x="16.1" y="27.7" width="1.9" height="1.9" fill="#d8d870"/><rect x="12.4" y="2.6" width="3.3" height="3.3" fill="#98b050"/><rect x="4.3" y="5.0" width="3.0" height="3.0" fill="#98b050"/><rect x="11.8" y="12.5" width="3.4" height="3.4" fill="#6a9040"/><rect x="9.6" y="3.5" width="3.4" height="3.4" fill="#c0c860"/><rect x="5.8" y="1.5" width="2.9" height="2.9" fill="#98b050"/><rect x="26.1" y="30.0" width="2.8" height="2.8" fill="#508868"/><rect x="5.7" y="29.4" width="2.9" height="2.9" fill="#2a5a30"/><rect x="9.4" y="23.1" width="1.7" height="1.7" fill="#c0c860"/><rect x="12.8" y="12.2" width="2.0" height="2.0" fill="#d8d870"/><rect x="23.8" y="14.1" width="2.6" height="2.6" fill="#c0c860"/><rect x="16.4" y="9.0" width="3.4" height="3.4" fill="#6a9040"/><rect x="8.2" y="25.7" width="2.2" height="2.2" fill="#508868"/><rect x="5.5" y="25.2" width="2.5" height="2.5" fill="#508868"/><rect x="8.6" y="14.4" width="2.4" height="2.4" fill="#98b050"/><rect x="23.2" y="21.7" width="1.9" height="1.9" fill="#508868"/><rect x="17.6" y="2.0" width="2.5" height="2.5" fill="#508868"/><rect x="4.6" y="1.2" width="2.1" height="2.1" fill="#6a9040"/><rect x="26.7" y="15.4" width="2.9" height="2.9" fill="#98b050"/><rect x="2.6" y="21.5" width="2.9" height="2.9" fill="#2a5a30"/><rect x="1.8" y="16.4" width="3.2" height="3.2" fill="#508868"/><rect x="5.2" y="25.4" width="2.8" height="2.8" fill="#6a9040"/><rect x="22.2" y="13.4" width="2.0" height="2.0" fill="#508868"/><rect x="15.1" y="18.6" width="2.1" height="2.1" fill="#6a9040"/><rect x="15.6" y="17.6" width="3.3" height="3.3" fill="#508868"/><rect x="19.9" y="18.6" width="2.9" height="2.9" fill="#98b050"/><rect x="13.4" y="27.5" width="1.5" height="1.5" fill="#2a5a30"/><rect x="11.7" y="5.3" width="3.1" height="3.1" fill="#d8d870"/><rect x="25.1" y="20.8" width="2.0" height="2.0" fill="#2a5a30"/><rect x="9.2" y="3.7" width="1.8" height="1.8" fill="#2a5a30"/><rect x="22.1" y="18.3" width="2.6" height="2.6" fill="#c0c860"/><rect x="5.1" y="22.3" width="3.1" height="3.1" fill="#c0c860"/><rect x="26.4" y="12.1" width="2.6" height="2.6" fill="#508868"/><rect x="24.3" y="15.9" width="3.4" height="3.4" fill="#c0c860"/><rect x="13.9" y="28.6" width="2.3" height="2.3" fill="#3a7038"/><rect x="4.6" y="7.0" width="2.3" height="2.3" fill="#3a7038"/><rect x="3.3" y="14.9" width="2.1" height="2.1" fill="#d8d870"/><rect x="27.9" y="1.8" width="2.4" height="2.4" fill="#2a5a30"/><rect x="12.9" y="17.4" width="1.6" height="1.6" fill="#2a5a30"/><rect x="8.3" y="1.1" width="2.1" height="2.1" fill="#98b050"/><rect x="9.7" y="29.1" width="2.4" height="2.4" fill="#6a9040"/><rect x="17.3" y="1.3" width="3.4" height="3.4" fill="#2a5a30"/><rect x="3.6" y="4.3" width="3.4" height="3.4" fill="#6a9040"/><rect x="17.1" y="19.2" width="1.8" height="1.8" fill="#3a7038"/><rect x="1.5" y="21.2" width="1.6" height="1.6" fill="#c0c860"/><rect x="13.7" y="29.6" width="2.8" height="2.8" fill="#6a9040"/><rect x="21.6" y="21.3" width="2.5" height="2.5" fill="#508868"/><rect x="15.9" y="4.2" width="2.7" height="2.7" fill="#3a7038"/><rect x="16.0" y="16.1" width="3.0" height="3.0" fill="#508868"/><rect x="3.7" y="23.5" width="2.3" height="2.3" fill="#3a7038"/><rect x="8.1" y="9.2" width="2.9" height="2.9" fill="#98b050"/><rect x="13.1" y="9.2" width="2.9" height="2.9" fill="#2a5a30"/><rect x="3.8" y="19.9" width="1.6" height="1.6" fill="#6a9040"/><rect x="4.5" y="22.8" width="3.1" height="3.1" fill="#6a9040"/><rect x="7.4" y="9.9" width="2.5" height="2.5" fill="#c0c860"/><rect x="18.4" y="2.3" width="2.6" height="2.6" fill="#98b050"/><rect x="5.0" y="14.9" width="2.2" height="2.2" fill="#d8d870"/><rect x="11.5" y="1.1" width="1.7" height="1.7" fill="#d8d870"/><rect x="3.9" y="24.1" width="2.0" height="2.0" fill="#508868"/><rect x="1.4" y="27.7" width="1.5" height="1.5" fill="#2a5a30"/><rect x="16.1" y="8.1" width="2.4" height="2.4" fill="#6a9040"/><rect x="13.7" y="11.3" width="3.0" height="3.0" fill="#3a7038"/><rect x="22.7" y="4.1" width="1.8" height="1.8" fill="#2a5a30"/><rect x="5.9" y="13.4" width="3.1" height="3.1" fill="#c0c860"/><rect x="18.4" y="23.3" width="2.3" height="2.3" fill="#d8d870"/><rect x="7.0" y="5.5" width="3.1" height="3.1" fill="#d8d870"/><rect x="12.5" y="12.4" width="2.3" height="2.3" fill="#d8d870"/><rect x="3.3" y="8.0" width="3.2" height="3.2" fill="#6a9040"/><rect x="18.2" y="17.2" width="2.4" height="2.4" fill="#508868"/><rect x="4.0" y="25.7" width="2.9" height="2.9" fill="#98b050"/><rect x="22.6" y="26.8" width="1.6" height="1.6" fill="#98b050"/><rect x="22.0" y="1.8" width="1.6" height="1.6" fill="#d8d870"/><rect x="8.9" y="13.3" width="2.2" height="2.2" fill="#508868"/><rect x="22.5" y="14.3" width="2.7" height="2.7" fill="#508868"/><rect x="13.8" y="7.0" width="2.6" height="2.6" fill="#508868"/><rect x="2.7" y="12.7" width="2.8" height="2.8" fill="#508868"/><rect x="6.5" y="26.5" width="1.6" height="1.6" fill="#6a9040"/><rect x="21.3" y="13.9" width="2.9" height="2.9" fill="#2a5a30"/><rect x="12.4" y="27.6" width="1.8" height="1.8" fill="#98b050"/><rect x="28.8" y="3.5" width="2.7" height="2.7" fill="#d8d870"/><rect x="14.0" y="28.1" width="2.9" height="2.9" fill="#98b050"/><rect x="1.4" y="21.6" width="2.8" height="2.8" fill="#d8d870"/><rect x="7.9" y="4.3" width="2.9" height="2.9" fill="#d8d870"/><rect x="17.2" y="6.9" width="1.6" height="1.6" fill="#d8d870"/><rect x="25.0" y="6.9" width="3.1" height="3.1" fill="#2a5a30"/><rect x="16.3" y="5.3" width="3.1" height="3.1" fill="#6a9040"/><rect x="21.9" y="1.5" width="1.6" height="1.6" fill="#98b050"/><rect x="5.9" y="14.8" width="2.8" height="2.8" fill="#6a9040"/><rect x="15.3" y="18.5" width="1.6" height="1.6" fill="#6a9040"/><rect x="5" y="12" width="17" height="12" fill="none" stroke="#e04018" stroke-width="1.6"/><path d="M0.5 31 V3.5 Q0.5 0.5 3.5 0.5 H28.5 Q31 0.5 31 3" fill="none" stroke="#d3dfc3" stroke-width="1"/><path d="M31.5 3 V28.5 Q31.5 31.5 28.5 31.5 H3 Q1 31.5 0.8 30" fill="none" stroke="#1a2012" stroke-width="1.3"/></svg>
<svg class="a" style="left:590px;top:707px" width="32" height="32" viewBox="0 0 32 32"><rect x="1" y="1" width="30" height="30" fill="#6b7d55"/><circle cx="8.5" cy="15.5" r="5.2" fill="#80887a" stroke="#0a0a0a" stroke-width="1.6"/><circle cx="24.5" cy="15.5" r="5.2" fill="#80887a" stroke="#0a0a0a" stroke-width="1.6"/><path d="M13 12 H20 V16 H13 Z M15 9 H18 V12 H15 Z" fill="#0a0a0a"/><path d="M0.5 31 V3.5 Q0.5 0.5 3.5 0.5 H28.5 Q31 0.5 31 3" fill="none" stroke="#d3dfc3" stroke-width="1"/><path d="M31.5 3 V28.5 Q31.5 31.5 28.5 31.5 H3 Q1 31.5 0.8 30" fill="none" stroke="#1a2012" stroke-width="1.3"/></svg>
<svg class="a" style="left:624px;top:707px" width="32" height="32" viewBox="0 0 32 32"><rect x="1" y="1" width="30" height="30" fill="#6b7d55"/><path d="M12.5 7 V10 M7 10 H24 M7 10 V13 M24 10 V26" stroke="#0a0a0a" stroke-width="1" fill="none"/><rect x="9" y="4" width="9" height="4" fill="#0a0a0a"/><rect x="8" y="3" width="9" height="4" fill="#9a9a9a"/><path d="M8 7 V3 H17" stroke="#d8d8d8" stroke-width="0.8" fill="none"/><rect x="4" y="13" width="9" height="4" fill="#0a0a0a"/><rect x="3" y="12" width="9" height="4" fill="#9a9a9a"/><path d="M3 16 V12 H12" stroke="#d8d8d8" stroke-width="0.8" fill="none"/><rect x="20" y="13" width="9" height="4" fill="#0a0a0a"/><rect x="19" y="12" width="9" height="4" fill="#9a9a9a"/><path d="M19 16 V12 H28" stroke="#d8d8d8" stroke-width="0.8" fill="none"/><rect x="20" y="19" width="9" height="4" fill="#0a0a0a"/><rect x="19" y="18" width="9" height="4" fill="#9a9a9a"/><path d="M19 22 V18 H28" stroke="#d8d8d8" stroke-width="0.8" fill="none"/><rect x="20" y="25" width="9" height="4" fill="#0a0a0a"/><rect x="19" y="24" width="9" height="4" fill="#9a9a9a"/><path d="M19 28 V24 H28" stroke="#d8d8d8" stroke-width="0.8" fill="none"/><path d="M0.5 31 V3.5 Q0.5 0.5 3.5 0.5 H28.5 Q31 0.5 31 3" fill="none" stroke="#d3dfc3" stroke-width="1"/><path d="M31.5 3 V28.5 Q31.5 31.5 28.5 31.5 H3 Q1 31.5 0.8 30" fill="none" stroke="#1a2012" stroke-width="1.3"/></svg>
<svg class="a" style="left:658px;top:707px" width="32" height="32" viewBox="0 0 32 32"><rect x="1" y="1" width="30" height="30" fill="#6b7d55"/><path d="M2 24 Q16 32 30 21 L30 26 Q16 35 2 28 Z" fill="#e01818"/><path d="M6 22 L8 13 L10 8 L9 5 L11 3 L13 5 L14 9 L16 7 L17 9 L14 13 L14 22 L12 22 L11 16 L9 22 Z" fill="#3a4048" stroke="#38e028" stroke-width="1.3"/><path d="M20 20 L19 13 L20 8 L22 6 L21 4 L23 2 L25 4 L25 7 L27 9 L27 14 L26 20 L24 20 L23 15 L22 20 Z" fill="#606870" stroke="#e8e030" stroke-width="1.1"/><path d="M0.5 31 V3.5 Q0.5 0.5 3.5 0.5 H28.5 Q31 0.5 31 3" fill="none" stroke="#d3dfc3" stroke-width="1"/><path d="M31.5 3 V28.5 Q31.5 31.5 28.5 31.5 H3 Q1 31.5 0.8 30" fill="none" stroke="#1a2012" stroke-width="1.3"/></svg>
<svg class="a" style="left:692px;top:707px" width="32" height="32" viewBox="0 0 32 32"><rect x="1" y="1" width="30" height="30" fill="#6b7d55"/><path d="M25 2 V14" stroke="#0a0a0a" stroke-width="1.2"/><rect x="5" y="14" width="3" height="10" fill="#2a2410"/><rect x="7" y="11" width="18" height="18" fill="#3a3012" stroke="#0a0a0a" stroke-width="1"/><rect x="9" y="14" width="1.2" height="1.2" fill="#c8b070"/><rect x="9" y="17" width="1.2" height="1.2" fill="#c8b070"/><rect x="9" y="20" width="1.2" height="1.2" fill="#c8b070"/><rect x="9" y="23" width="1.2" height="1.2" fill="#c8b070"/><rect x="12" y="14" width="1.2" height="1.2" fill="#c8b070"/><rect x="12" y="17" width="1.2" height="1.2" fill="#c8b070"/><rect x="12" y="20" width="1.2" height="1.2" fill="#c8b070"/><rect x="12" y="23" width="1.2" height="1.2" fill="#c8b070"/><rect x="15" y="14" width="1.2" height="1.2" fill="#c8b070"/><rect x="15" y="17" width="1.2" height="1.2" fill="#c8b070"/><rect x="15" y="20" width="1.2" height="1.2" fill="#c8b070"/><rect x="15" y="23" width="1.2" height="1.2" fill="#c8b070"/><rect x="18" y="14" width="1.2" height="1.2" fill="#c8b070"/><rect x="18" y="17" width="1.2" height="1.2" fill="#c8b070"/><rect x="18" y="20" width="1.2" height="1.2" fill="#c8b070"/><rect x="18" y="23" width="1.2" height="1.2" fill="#c8b070"/><rect x="21" y="14" width="1.2" height="1.2" fill="#c8b070"/><rect x="21" y="17" width="1.2" height="1.2" fill="#c8b070"/><rect x="21" y="20" width="1.2" height="1.2" fill="#c8b070"/><rect x="21" y="23" width="1.2" height="1.2" fill="#c8b070"/><path d="M0.5 31 V3.5 Q0.5 0.5 3.5 0.5 H28.5 Q31 0.5 31 3" fill="none" stroke="#d3dfc3" stroke-width="1"/><path d="M31.5 3 V28.5 Q31.5 31.5 28.5 31.5 H3 Q1 31.5 0.8 30" fill="none" stroke="#1a2012" stroke-width="1.3"/></svg>
<svg class="a" style="left:726px;top:707px" width="32" height="32" viewBox="0 0 32 32"><rect x="1" y="1" width="30" height="30" fill="#6b7d55"/><path d="M6 1 L11 8 M22 1 L19 8 M11 8 L8 15 M1 15 H8 M8 15 L11 22 M11 22 L7 30 M19 22 L22 15 L19 8 M22 15 H31 M19 22 L23 30" stroke="#1a2012" stroke-width="0.8" fill="none"/><path d="M1 15 H8 L11 8 H19 L24 1" stroke="#2858c0" stroke-width="1.5" fill="none"/><path d="M8 30 L11 22 H19 L22 15 H31" stroke="#c02828" stroke-width="1.5" fill="none"/><path d="M0.5 31 V3.5 Q0.5 0.5 3.5 0.5 H28.5 Q31 0.5 31 3" fill="none" stroke="#d3dfc3" stroke-width="1"/><path d="M31.5 3 V28.5 Q31.5 31.5 28.5 31.5 H3 Q1 31.5 0.8 30" fill="none" stroke="#1a2012" stroke-width="1.3"/></svg>
<svg class="a" style="left:760px;top:707px" width="32" height="32" viewBox="0 0 32 32"><rect x="1" y="1" width="30" height="30" fill="#6b7d55"/><path d="M31 2 V31 H3 Z" fill="#a88858"/><rect x="23.6" y="25.6" width="1.5" height="1.5" fill="#d8b890"/><rect x="17.1" y="30.9" width="1.6" height="1.6" fill="#f0e0c0"/><rect x="17.5" y="30.2" width="1.9" height="1.9" fill="#d8b890"/><rect x="28.6" y="6.6" width="2.0" height="2.0" fill="#504030"/><rect x="29.2" y="8.8" width="1.3" height="1.3" fill="#806848"/><rect x="24.9" y="26.1" width="0.8" height="0.8" fill="#806848"/><rect x="21.3" y="16.6" width="1.4" height="1.4" fill="#806848"/><rect x="30.8" y="20.3" width="1.9" height="1.9" fill="#504030"/><rect x="29.9" y="11.8" width="1.9" height="1.9" fill="#d8b890"/><rect x="18.5" y="18.0" width="1.5" height="1.5" fill="#d8b890"/><rect x="27.0" y="18.4" width="2.1" height="2.1" fill="#806848"/><rect x="27.9" y="28.3" width="0.9" height="0.9" fill="#504030"/><rect x="18.7" y="17.3" width="2.1" height="2.1" fill="#f0e0c0"/><rect x="18.9" y="17.2" width="1.8" height="1.8" fill="#f0e0c0"/><rect x="12.8" y="23.2" width="0.9" height="0.9" fill="#806848"/><rect x="28.2" y="23.1" width="1.4" height="1.4" fill="#d8b890"/><rect x="29.8" y="9.8" width="1.7" height="1.7" fill="#806848"/><rect x="14.7" y="21.9" width="1.6" height="1.6" fill="#d8b890"/><rect x="21.5" y="30.0" width="1.2" height="1.2" fill="#504030"/><rect x="14.5" y="27.4" width="1.1" height="1.1" fill="#d8b890"/><rect x="20.0" y="24.8" width="2.2" height="2.2" fill="#504030"/><rect x="26.5" y="26.1" width="1.7" height="1.7" fill="#f0e0c0"/><rect x="23.7" y="13.1" width="2.0" height="2.0" fill="#806848"/><rect x="29.5" y="27.8" width="1.0" height="1.0" fill="#504030"/><rect x="18.5" y="29.3" width="1.2" height="1.2" fill="#d8b890"/><rect x="18.7" y="15.5" width="1.3" height="1.3" fill="#f0e0c0"/><rect x="12.3" y="27.5" width="2.2" height="2.2" fill="#f0e0c0"/><rect x="20.2" y="16.3" width="2.0" height="2.0" fill="#d8b890"/><rect x="18.5" y="24.3" width="1.2" height="1.2" fill="#d8b890"/><rect x="14.3" y="30.4" width="0.8" height="0.8" fill="#806848"/><rect x="24.4" y="8.7" width="2.0" height="2.0" fill="#d8b890"/><rect x="23.7" y="21.3" width="1.6" height="1.6" fill="#504030"/><rect x="10.8" y="27.1" width="0.9" height="0.9" fill="#504030"/><rect x="18.3" y="19.7" width="1.3" height="1.3" fill="#504030"/><rect x="26.1" y="22.9" width="1.0" height="1.0" fill="#f0e0c0"/><rect x="18.6" y="20.0" width="2.0" height="2.0" fill="#806848"/><rect x="9.4" y="27.2" width="1.0" height="1.0" fill="#806848"/><rect x="19.2" y="29.6" width="0.9" height="0.9" fill="#806848"/><rect x="17.8" y="20.4" width="1.6" height="1.6" fill="#f0e0c0"/><path d="M2 4 Q3 1 6 2 L22 18 L24 16 L26 27 L15 25 L18 22 L3 7 Z" fill="#f0a010"/><path d="M18 26 L22 30 L24 28" stroke="#0a0a0a" stroke-width="1.5" fill="none"/><path d="M0.5 31 V3.5 Q0.5 0.5 3.5 0.5 H28.5 Q31 0.5 31 3" fill="none" stroke="#d3dfc3" stroke-width="1"/><path d="M31.5 3 V28.5 Q31.5 31.5 28.5 31.5 H3 Q1 31.5 0.8 30" fill="none" stroke="#1a2012" stroke-width="1.3"/></svg>
<svg class="a" style="left:794px;top:707px" width="32" height="32" viewBox="0 0 32 32"><rect x="1" y="1" width="30" height="30" fill="#6b7d55"/><path d="M1 6 L31 31 H1 Z" fill="#a88858"/><rect x="19.4" y="28.6" width="1.7" height="1.7" fill="#f0e0c0"/><rect x="8.9" y="28.6" width="1.4" height="1.4" fill="#d8b890"/><rect x="8.7" y="29.8" width="1.4" height="1.4" fill="#806848"/><rect x="5.8" y="21.6" width="1.3" height="1.3" fill="#f0e0c0"/><rect x="3.2" y="18.9" width="1.4" height="1.4" fill="#806848"/><rect x="6.0" y="12.1" width="0.9" height="0.9" fill="#504030"/><rect x="5.6" y="23.3" width="1.2" height="1.2" fill="#f0e0c0"/><rect x="7.2" y="21.6" width="1.2" height="1.2" fill="#d8b890"/><rect x="6.6" y="27.0" width="0.9" height="0.9" fill="#504030"/><rect x="7.7" y="23.4" width="1.6" height="1.6" fill="#f0e0c0"/><rect x="16.3" y="19.9" width="1.0" height="1.0" fill="#806848"/><rect x="10.7" y="23.7" width="1.8" height="1.8" fill="#d8b890"/><rect x="15.6" y="19.0" width="1.0" height="1.0" fill="#806848"/><rect x="20.4" y="26.0" width="2.1" height="2.1" fill="#806848"/><rect x="13.7" y="25.1" width="2.0" height="2.0" fill="#d8b890"/><rect x="4.9" y="29.5" width="0.8" height="0.8" fill="#f0e0c0"/><rect x="9.0" y="22.1" width="1.7" height="1.7" fill="#f0e0c0"/><rect x="13.3" y="23.5" width="0.8" height="0.8" fill="#504030"/><rect x="4.2" y="13.8" width="1.4" height="1.4" fill="#504030"/><rect x="3.6" y="8.5" width="1.1" height="1.1" fill="#504030"/><rect x="6.4" y="13.5" width="2.0" height="2.0" fill="#806848"/><rect x="1.1" y="10.7" width="1.4" height="1.4" fill="#f0e0c0"/><rect x="21.3" y="28.7" width="1.1" height="1.1" fill="#f0e0c0"/><rect x="2.5" y="15.7" width="1.4" height="1.4" fill="#f0e0c0"/><rect x="3.4" y="20.4" width="2.1" height="2.1" fill="#504030"/><rect x="1.2" y="24.3" width="2.1" height="2.1" fill="#d8b890"/><rect x="14.1" y="30.2" width="1.1" height="1.1" fill="#d8b890"/><rect x="8.1" y="27.1" width="0.8" height="0.8" fill="#d8b890"/><rect x="6.0" y="29.7" width="1.6" height="1.6" fill="#d8b890"/><rect x="2.2" y="22.4" width="2.1" height="2.1" fill="#806848"/><rect x="1.1" y="25.5" width="0.9" height="0.9" fill="#806848"/><path d="M4 18 Q10 12 18 11 L21 9 L20 6 L28 10 L25 17 L23 14 L19 16 Q12 20 8 25 Z" fill="#d8d820"/><path d="M0.5 31 V3.5 Q0.5 0.5 3.5 0.5 H28.5 Q31 0.5 31 3" fill="none" stroke="#d3dfc3" stroke-width="1"/><path d="M31.5 3 V28.5 Q31.5 31.5 28.5 31.5 H3 Q1 31.5 0.8 30" fill="none" stroke="#1a2012" stroke-width="1.3"/></svg>
<svg class="a" style="left:828px;top:707px" width="32" height="32" viewBox="0 0 32 32"><rect x="1" y="1" width="30" height="30" fill="#44563c"/><polygon points="3.0,4.0 5.0,1.0 9.0,1.0 11.0,4.0 9.0,7.0 5.0,7.0" fill="#3e5038" stroke="#243020" stroke-width="0.8"/><polygon points="11.5,7.2 13.5,4.2 17.5,4.2 19.5,7.2 17.5,10.2 13.5,10.2" fill="#3e5038" stroke="#243020" stroke-width="0.8"/><polygon points="20.0,4.0 22.0,1.0 26.0,1.0 28.0,4.0 26.0,7.0 22.0,7.0" fill="#3e5038" stroke="#243020" stroke-width="0.8"/><polygon points="3.0,10.5 5.0,7.5 9.0,7.5 11.0,10.5 9.0,13.5 5.0,13.5" fill="#3e5038" stroke="#243020" stroke-width="0.8"/><polygon points="11.5,13.7 13.5,10.7 17.5,10.7 19.5,13.7 17.5,16.7 13.5,16.7" fill="#6a8a58" stroke="#243020" stroke-width="0.8"/><polygon points="20.0,10.5 22.0,7.5 26.0,7.5 28.0,10.5 26.0,13.5 22.0,13.5" fill="#3e5038" stroke="#243020" stroke-width="0.8"/><polygon points="3.0,17.0 5.0,14.0 9.0,14.0 11.0,17.0 9.0,20.0 5.0,20.0" fill="#3e5038" stroke="#243020" stroke-width="0.8"/><polygon points="11.5,20.2 13.5,17.2 17.5,17.2 19.5,20.2 17.5,23.2 13.5,23.2" fill="#6a8a58" stroke="#243020" stroke-width="0.8"/><polygon points="20.0,17.0 22.0,14.0 26.0,14.0 28.0,17.0 26.0,20.0 22.0,20.0" fill="#6a8a58" stroke="#243020" stroke-width="0.8"/><polygon points="3.0,23.5 5.0,20.5 9.0,20.5 11.0,23.5 9.0,26.5 5.0,26.5" fill="#6a8a58" stroke="#243020" stroke-width="0.8"/><polygon points="11.5,26.7 13.5,23.7 17.5,23.7 19.5,26.7 17.5,29.7 13.5,29.7" fill="#6a8a58" stroke="#243020" stroke-width="0.8"/><polygon points="20.0,23.5 22.0,20.5 26.0,20.5 28.0,23.5 26.0,26.5 22.0,26.5" fill="#3e5038" stroke="#243020" stroke-width="0.8"/><polygon points="3.0,30.0 5.0,27.0 9.0,27.0 11.0,30.0 9.0,33.0 5.0,33.0" fill="#6a8a58" stroke="#243020" stroke-width="0.8"/><polygon points="11.5,33.2 13.5,30.200000000000003 17.5,30.200000000000003 19.5,33.2 17.5,36.2 13.5,36.2" fill="#6a8a58" stroke="#243020" stroke-width="0.8"/><polygon points="20.0,30.0 22.0,27.0 26.0,27.0 28.0,30.0 26.0,33.0 22.0,33.0" fill="#3e5038" stroke="#243020" stroke-width="0.8"/><rect x="19" y="20" width="5" height="5" fill="#d8e0e8" stroke="#a0a8b0" stroke-width="0.5"/><path d="M0.5 31 V3.5 Q0.5 0.5 3.5 0.5 H28.5 Q31 0.5 31 3" fill="none" stroke="#d3dfc3" stroke-width="1"/><path d="M31.5 3 V28.5 Q31.5 31.5 28.5 31.5 H3 Q1 31.5 0.8 30" fill="none" stroke="#1a2012" stroke-width="1.3"/></svg>
<svg class="a" style="left:910px;top:707px" width="32" height="32" viewBox="0 0 32 32"><rect x="1" y="1" width="30" height="30" fill="#e01010"/><rect x="1" y="1" width="30" height="30" fill="#e01010"/><defs><clipPath id="clk"><circle cx="16" cy="16" r="11"/></clipPath></defs><circle cx="16" cy="16" r="11.5" fill="#5a7266" stroke="#101010" stroke-width="2"/><g clip-path="url(#clk)"><path d="M-10 0 L10 32" stroke="#8a9a8a" stroke-width="0.6"/><path d="M-8 0 L12 32" stroke="#8a9a8a" stroke-width="0.6"/><path d="M-6 0 L14 32" stroke="#8a9a8a" stroke-width="0.6"/><path d="M-4 0 L16 32" stroke="#8a9a8a" stroke-width="0.6"/><path d="M-2 0 L18 32" stroke="#8a9a8a" stroke-width="0.6"/><path d="M0 0 L20 32" stroke="#8a9a8a" stroke-width="0.6"/><path d="M2 0 L22 32" stroke="#8a9a8a" stroke-width="0.6"/><path d="M4 0 L24 32" stroke="#8a9a8a" stroke-width="0.6"/><path d="M6 0 L26 32" stroke="#8a9a8a" stroke-width="0.6"/><path d="M8 0 L28 32" stroke="#8a9a8a" stroke-width="0.6"/><path d="M10 0 L30 32" stroke="#8a9a8a" stroke-width="0.6"/><path d="M12 0 L32 32" stroke="#8a9a8a" stroke-width="0.6"/><path d="M14 0 L34 32" stroke="#8a9a8a" stroke-width="0.6"/><path d="M16 0 L36 32" stroke="#8a9a8a" stroke-width="0.6"/><path d="M18 0 L38 32" stroke="#8a9a8a" stroke-width="0.6"/><path d="M20 0 L40 32" stroke="#8a9a8a" stroke-width="0.6"/><path d="M22 0 L42 32" stroke="#8a9a8a" stroke-width="0.6"/><path d="M24 0 L44 32" stroke="#8a9a8a" stroke-width="0.6"/><path d="M26 0 L46 32" stroke="#8a9a8a" stroke-width="0.6"/><path d="M28 0 L48 32" stroke="#8a9a8a" stroke-width="0.6"/></g><path d="M16 16 L8 24" stroke="#b0b8b0" stroke-width="1"/><circle cx="16" cy="16" r="12" fill="none" stroke="#101010" stroke-width="2.2"/><path d="M3 4 L7 2 M29 4 L25 2" stroke="#101010" stroke-width="2"/><path d="M16 8 V17 M16 17 H24" stroke="#101010" stroke-width="1.6"/><path d="M17 16 H25" stroke="#e02020" stroke-width="1"/><path d="M0.5 31 V3.5 Q0.5 0.5 3.5 0.5 H28.5 Q31 0.5 31 3" fill="none" stroke="#d3dfc3" stroke-width="1"/><path d="M31.5 3 V28.5 Q31.5 31.5 28.5 31.5 H3 Q1 31.5 0.8 30" fill="none" stroke="#1a2012" stroke-width="1.3"/></svg>
<div class="a" style="left:51px;top:746px;font-weight:bold;font-size:14px;color:#fff;line-height:15px">0</div>
<div class="a" style="left:65px;top:750px;width:90px;height:9px;background:#fff;border:1px solid #000;border-width:1px 2px 2px 1px"></div>
<div class="a" style="left:160px;top:746px;font-weight:bold;font-size:14px;color:#fff;line-height:15px">0</div>
<svg class="a" style="left:184px;top:749px" width="13" height="13"><circle cx="6.5" cy="6.5" r="5.5" fill="#909090"/><circle cx="5.5" cy="5.5" r="3" fill="#c8c8c8" opacity="0.7"/><path d="M3 6 L8 11 M5 3 L10 8" stroke="#606060" stroke-width="0.6"/></svg>
<div class="a" style="left:202px;top:746px;font-weight:bold;font-size:14px;color:#fff;line-height:15px">0</div>
<div class="a" style="left:491px;top:747px;font-weight:bold;font-size:12px;letter-spacing:1.4px;color:#fff;line-height:13px">Ready</div>
</div>
</body></html>
